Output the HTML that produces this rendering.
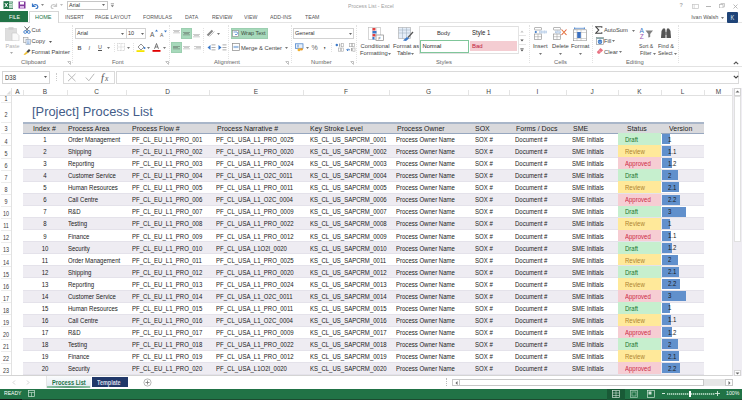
<!DOCTYPE html><html><head><meta charset="utf-8"><style>
*{margin:0;padding:0;box-sizing:border-box}
html,body{width:742px;height:400px;overflow:hidden;background:#fff;font-family:"Liberation Sans",sans-serif}
body>div,.a{position:absolute}
.t{position:absolute;white-space:nowrap}
</style></head><body>
<div class="t" style="left:348px;top:2px;font-size:6px;line-height:8px;color:#a0a0a0;transform:scaleX(0.867);transform-origin:0 0">Process List - Excel</div>
<div style="left:0px;top:11px;width:27.5px;height:11.5px;background:#217346"></div>
<div class="t" style="left:8.5px;top:13.5px;font-size:5.6px;line-height:7.6px;color:#fff;transform:scaleX(0.93);transform-origin:0 0">FILE</div>
<div style="left:29px;top:11px;width:30px;height:12px;background:#fff;border:1px solid #d6d6d6;border-bottom:none"></div>
<div class="t" style="left:35px;top:13.5px;font-size:5.6px;line-height:7.6px;color:#217346;transform:scaleX(0.98);transform-origin:0 0">HOME</div>
<div class="t" style="left:65px;top:13.5px;font-size:5.6px;line-height:7.6px;color:#555;transform:scaleX(0.93);transform-origin:0 0">INSERT</div>
<div class="t" style="left:95px;top:13.5px;font-size:5.6px;line-height:7.6px;color:#555;transform:scaleX(0.93);transform-origin:0 0">PAGE LAYOUT</div>
<div class="t" style="left:143px;top:13.5px;font-size:5.6px;line-height:7.6px;color:#555;transform:scaleX(0.93);transform-origin:0 0">FORMULAS</div>
<div class="t" style="left:185px;top:13.5px;font-size:5.6px;line-height:7.6px;color:#555;transform:scaleX(0.93);transform-origin:0 0">DATA</div>
<div class="t" style="left:212px;top:13.5px;font-size:5.6px;line-height:7.6px;color:#555;transform:scaleX(0.93);transform-origin:0 0">REVIEW</div>
<div class="t" style="left:244px;top:13.5px;font-size:5.6px;line-height:7.6px;color:#555;transform:scaleX(0.93);transform-origin:0 0">VIEW</div>
<div class="t" style="left:270px;top:13.5px;font-size:5.6px;line-height:7.6px;color:#555;transform:scaleX(0.93);transform-origin:0 0">ADD-INS</div>
<div class="t" style="left:305px;top:13.5px;font-size:5.6px;line-height:7.6px;color:#555;transform:scaleX(0.93);transform-origin:0 0">TEAM</div>
<div style="left:0px;top:22px;width:29px;height:1px;background:#e4e4e4"></div>
<div style="left:59px;top:22px;width:683px;height:1px;background:#e4e4e4"></div>
<div style="left:0px;top:66px;width:742px;height:1px;background:#e2e2e2"></div>
<svg style="position:absolute;left:3px;top:1px;" width="10" height="8" viewBox="0 0 10 8"><rect x="3" y="1" width="7" height="6.5" fill="#fff" stroke="#1e7145" stroke-width="0.8"/><line x1="6" y1="2.5" x2="9" y2="2.5" stroke="#4ea06e" stroke-width="0.8"/><line x1="6" y1="4.2" x2="9" y2="4.2" stroke="#4ea06e" stroke-width="0.8"/><line x1="6" y1="6" x2="9" y2="6" stroke="#4ea06e" stroke-width="0.8"/><rect x="0.5" y="0.2" width="5.5" height="7.8" fill="#1e7145"/><path d="M1.8 2 L4.6 6.2 M4.6 2 L1.8 6.2" stroke="#fff" stroke-width="1"/></svg>
<svg style="position:absolute;left:18px;top:1px;" width="8" height="8" viewBox="0 0 8 8"><rect x="0.5" y="0.5" width="7" height="7" fill="#80379b"/><rect x="2" y="1" width="4" height="2.5" fill="#fff"/><rect x="2" y="5" width="4" height="2.5" fill="#d9b8e6"/></svg>
<svg style="position:absolute;left:31px;top:2px;" width="8" height="7" viewBox="0 0 8 7"><path d="M1.5 1.5 L1.5 4.5 L4.5 4.5" fill="none" stroke="#3a78c8" stroke-width="1.2"/><path d="M1.8 4.2 C3 2 6.5 2 6.8 4.5 C7 6 5.5 6.8 4.5 6.8" fill="none" stroke="#3a78c8" stroke-width="1.3"/></svg>
<svg style="position:absolute;left:41px;top:4px;" width="3" height="2" viewBox="0 0 3 2"><path d="M0 0 L3 0 L1.5 2Z" fill="#888"/></svg>
<svg style="position:absolute;left:50px;top:2px;" width="8" height="7" viewBox="0 0 8 7"><path d="M6.5 1.5 L6.5 4.5 L3.5 4.5" fill="none" stroke="#c8c8c8" stroke-width="1.2"/><path d="M6.2 4.2 C5 2 1.5 2 1.2 4.5 C1 6 2.5 6.8 3.5 6.8" fill="none" stroke="#c8c8c8" stroke-width="1.3"/></svg>
<svg style="position:absolute;left:60px;top:4px;" width="3" height="2" viewBox="0 0 3 2"><path d="M0 0 L3 0 L1.5 2Z" fill="#bbb"/></svg>
<div style="left:67px;top:1px;width:41px;height:9px;border:1px solid #c6c6c6;background:#fff"></div>
<div class="t" style="left:69px;top:2px;font-size:5.5px;line-height:7px;color:#333;">Arial</div>
<svg style="position:absolute;left:102px;top:4px;" width="3" height="2" viewBox="0 0 3 2"><path d="M0 0 L3 0 L1.5 2Z" fill="#666"/></svg>
<svg style="position:absolute;left:110px;top:3px;" width="5" height="5" viewBox="0 0 5 5"><line x1="0.8" y1="0.8" x2="4" y2="0.8" stroke="#777" stroke-width="0.7"/><path d="M0.8 2.2 L4 2.2 L2.4 4.2Z" fill="#777"/></svg>
<div class="t" style="left:679.5px;top:2px;font-size:5.5px;line-height:7px;color:#a8a8a8;font-weight:bold">?</div>
<svg style="position:absolute;left:692px;top:3.5px;" width="7" height="5" viewBox="0 0 7 5"><rect x="0.5" y="0.5" width="6" height="4" fill="none" stroke="#c4c4c4" stroke-width="0.7"/><line x1="2.2" y1="0.5" x2="2.2" y2="4.5" stroke="#c4c4c4" stroke-width="0.6"/></svg>
<div style="left:705.5px;top:5.5px;width:5px;height:1px;background:#b4b4b4"></div>
<svg style="position:absolute;left:719px;top:3px;" width="6" height="5" viewBox="0 0 6 5"><rect x="0.5" y="1.5" width="3.5" height="3.5" fill="none" stroke="#b4b4b4" stroke-width="0.7"/><path d="M1.8 1.5 V0.5 H5.5 V3.8 H4" fill="none" stroke="#b4b4b4" stroke-width="0.7"/></svg>
<svg style="position:absolute;left:733px;top:3.5px;" width="5" height="5" viewBox="0 0 5 5"><path d="M0.5 0.5 L4.5 4.5 M4.5 0.5 L0.5 4.5" stroke="#a8a8a8" stroke-width="0.8"/></svg>
<div class="t" style="left:691.3px;top:14px;font-size:5.5px;line-height:7px;color:#555;">Ivan Walsh</div>
<svg style="position:absolute;left:720.5px;top:17px;" width="3" height="2" viewBox="0 0 3 2"><path d="M0 0 L3 0 L1.5 2Z" fill="#777"/></svg>
<div style="left:727px;top:12px;width:10.5px;height:10.5px;background:#1f4478;border-radius:1px"></div>
<div class="t" style="left:730px;top:13.5px;font-size:7px;line-height:7px;color:#dfe8f5;transform:scaleX(0.8)">K</div>
<svg style="position:absolute;left:5px;top:27px;" width="15" height="14" viewBox="0 0 15 14"><rect x="0.5" y="1.5" width="11" height="12" fill="#dedede" stroke="#cfcfcf" stroke-width="0.6"/><rect x="3.5" y="0.2" width="5" height="2.5" fill="#cfcfcf"/><path d="M7 6 H11.5 L14 8.5 V13.8 H7Z" fill="#fafafa" stroke="#c8c8c8" stroke-width="0.6"/></svg>
<div class="t" style="left:5.5px;top:43px;font-size:5.5px;line-height:7px;color:#b0b0b0;">Paste</div>
<svg style="position:absolute;left:10px;top:52px;" width="3" height="2" viewBox="0 0 3 2"><path d="M0 0 L3 0 L1.5 2Z" fill="#aaa"/></svg>
<svg style="position:absolute;left:23px;top:26px;" width="8" height="8" viewBox="0 0 8 8"><path d="M1.5 0.5 L5.5 5 M6.5 0.5 L2.5 5" stroke="#555" stroke-width="0.9"/><circle cx="2.2" cy="6" r="1.4" fill="none" stroke="#3b7ac8" stroke-width="0.9"/><circle cx="5.8" cy="6" r="1.4" fill="none" stroke="#3b7ac8" stroke-width="0.9"/></svg>
<div class="t" style="left:31.5px;top:26.5px;font-size:5.8px;line-height:7px;color:#444;">Cut</div>
<svg style="position:absolute;left:22.5px;top:37px;" width="8" height="8" viewBox="0 0 8 8"><rect x="0.5" y="0.5" width="4.5" height="5" fill="#f4f4f4" stroke="#999" stroke-width="0.6"/><rect x="3" y="2.5" width="4.5" height="5" fill="#eef3fa" stroke="#8a9bb0" stroke-width="0.6"/><path d="M4 4 H6.5 M4 5.3 H6.5 M4 6.5 H6.5" stroke="#5a8fd0" stroke-width="0.5"/></svg>
<div class="t" style="left:31.5px;top:37.5px;font-size:5.8px;line-height:7px;color:#444;">Copy</div>
<svg style="position:absolute;left:49px;top:41px;" width="3" height="2" viewBox="0 0 3 2"><path d="M0 0 L3 0 L1.5 2Z" fill="#555"/></svg>
<svg style="position:absolute;left:23px;top:48px;" width="8" height="7" viewBox="0 0 8 7"><path d="M0.5 6.5 L3.5 3.5 L5 5 L2 7Z" fill="#f2c233"/><path d="M3.5 3.5 L6 1 L7.5 2.5 L5 5Z" fill="#444"/></svg>
<div class="t" style="left:31.5px;top:48.5px;font-size:5.8px;line-height:7px;color:#444;">Format Painter</div>
<div class="t" style="left:21px;top:58.5px;font-size:5.8px;line-height:7px;color:#666;">Clipboard</div>
<svg style="position:absolute;left:67px;top:61px;" width="4" height="4" viewBox="0 0 4 4"><path d="M0.5 0.5 H3.5 V3.5" fill="none" stroke="#999" stroke-width="0.6"/><path d="M1 1 L3.3 3.3" stroke="#999" stroke-width="0.6"/></svg>
<div style="left:72px;top:25px;width:1px;height:38px;border-left:1px dotted #e2e2e2"></div>
<div style="left:75px;top:28px;width:52px;height:11px;border:1px solid #d2d2d2;background:#fff"></div>
<div style="left:126px;top:28px;width:20px;height:11px;border:1px solid #d2d2d2;background:#fff"></div>
<div class="t" style="left:77px;top:30px;font-size:5.5px;line-height:7px;color:#333;">Arial</div>
<svg style="position:absolute;left:121px;top:33px;" width="3" height="2" viewBox="0 0 3 2"><path d="M0 0 L3 0 L1.5 2Z" fill="#666"/></svg>
<div class="t" style="left:128px;top:30px;font-size:5.5px;line-height:7px;color:#333;">10</div>
<svg style="position:absolute;left:141px;top:33px;" width="3" height="2" viewBox="0 0 3 2"><path d="M0 0 L3 0 L1.5 2Z" fill="#666"/></svg>
<div class="t" style="left:150px;top:30.5px;font-size:6.5px;line-height:7px;color:#555;">A</div>
<svg style="position:absolute;left:155px;top:29px;" width="3" height="3" viewBox="0 0 3 3"><path d="M0 2.5 L1.5 0.5 L3 2.5Z" fill="#3a78c8"/></svg>
<div class="t" style="left:160px;top:32px;font-size:5px;line-height:7px;color:#555;">A</div>
<svg style="position:absolute;left:164px;top:30px;" width="3" height="3" viewBox="0 0 3 3"><path d="M0 0.5 L1.5 2.5 L3 0.5Z" fill="#3a78c8"/></svg>
<div class="t" style="left:77.5px;top:44.5px;font-size:5.5px;line-height:7px;color:#555;font-weight:bold">B</div>
<div class="t" style="left:88.5px;top:44.5px;font-size:5.5px;line-height:7px;color:#555;font-style:italic;font-family:"Liberation Serif",serif">I</div>
<div class="t" style="left:98px;top:44px;font-size:5.5px;line-height:7px;color:#555;text-decoration:underline">U</div>
<svg style="position:absolute;left:107px;top:47px;" width="3" height="2" viewBox="0 0 3 2"><path d="M0 0 L3 0 L1.5 2Z" fill="#777"/></svg>
<div style="left:114px;top:43px;width:1px;height:9px;border-left:1px dotted #e2e2e2"></div>
<svg style="position:absolute;left:117px;top:43px;" width="8" height="8" viewBox="0 0 8 8"><rect x="0.5" y="0.5" width="7" height="7" fill="none" stroke="#bbb" stroke-width="0.6" stroke-dasharray="1 0.6"/><line x1="4" y1="0.5" x2="4" y2="7.5" stroke="#ccc" stroke-width="0.5"/><line x1="0.5" y1="4" x2="7.5" y2="4" stroke="#ccc" stroke-width="0.5"/></svg>
<svg style="position:absolute;left:127px;top:47px;" width="3" height="2" viewBox="0 0 3 2"><path d="M0 0 L3 0 L1.5 2Z" fill="#777"/></svg>
<div style="left:133px;top:43px;width:1px;height:9px;border-left:1px dotted #e2e2e2"></div>
<svg style="position:absolute;left:136px;top:42px;" width="10" height="10" viewBox="0 0 10 10"><path d="M2 5 L5 2 L8 5 L5 8Z" fill="#fff" stroke="#666" stroke-width="0.7"/><circle cx="8.5" cy="6" r="1" fill="#3a78c8"/><rect x="0.5" y="8.2" width="8" height="1.8" fill="#f5e400"/></svg>
<svg style="position:absolute;left:147px;top:47px;" width="3" height="2" viewBox="0 0 3 2"><path d="M0 0 L3 0 L1.5 2Z" fill="#777"/></svg>
<svg style="position:absolute;left:152px;top:42px;" width="9" height="10" viewBox="0 0 9 10"><path d="M2.5 6.8 L4.5 1.5 L6.5 6.8 M3.2 5 H5.8" fill="none" stroke="#555" stroke-width="0.8"/><rect x="0.5" y="8" width="8" height="1.8" fill="#e00000"/></svg>
<svg style="position:absolute;left:163px;top:47px;" width="3" height="2" viewBox="0 0 3 2"><path d="M0 0 L3 0 L1.5 2Z" fill="#777"/></svg>
<div class="t" style="left:112px;top:58.5px;font-size:5.8px;line-height:7px;color:#666;">Font</div>
<svg style="position:absolute;left:165px;top:61px;" width="4" height="4" viewBox="0 0 4 4"><path d="M0.5 0.5 H3.5 V3.5" fill="none" stroke="#999" stroke-width="0.6"/><path d="M1 1 L3.3 3.3" stroke="#999" stroke-width="0.6"/></svg>
<div style="left:169px;top:25px;width:1px;height:38px;border-left:1px dotted #e2e2e2"></div>
<svg style="position:absolute;left:173px;top:29.5px;" width="7" height="4.9" viewBox="0 0 7 4.9"><rect x="0" y="0.0" width="7" height="0.6" fill="#aaa"/><rect x="1" y="1.3" width="5" height="0.6" fill="#aaa"/><rect x="0" y="2.6" width="7" height="0.6" fill="#aaa"/></svg>
<div style="left:181px;top:28px;width:11px;height:11px;background:#a7d9bb;border:1px solid #9ccfb0"></div>
<svg style="position:absolute;left:183px;top:31.5px;" width="7" height="4.9" viewBox="0 0 7 4.9"><rect x="0" y="0.0" width="7" height="0.6" fill="#6a7a70"/><rect x="1" y="1.3" width="5" height="0.6" fill="#6a7a70"/><rect x="0" y="2.6" width="7" height="0.6" fill="#6a7a70"/></svg>
<svg style="position:absolute;left:193px;top:33.5px;" width="7" height="4.9" viewBox="0 0 7 4.9"><rect x="0" y="0.0" width="7" height="0.6" fill="#aaa"/><rect x="1" y="1.3" width="5" height="0.6" fill="#aaa"/><rect x="0" y="2.6" width="7" height="0.6" fill="#aaa"/></svg>
<svg style="position:absolute;left:206px;top:29px;" width="9" height="8" viewBox="0 0 9 8"><path d="M1.5 6.5 L6.5 1.5" stroke="#888" stroke-width="2.2"/><path d="M3.5 7.5 L8.5 2.5" stroke="#aaa" stroke-width="0.7"/></svg>
<svg style="position:absolute;left:217px;top:33px;" width="3" height="2" viewBox="0 0 3 2"><path d="M0 0 L3 0 L1.5 2Z" fill="#777"/></svg>
<div style="left:171px;top:42px;width:11px;height:11px;background:#a7d9bb;border:1px solid #9ccfb0"></div>
<svg style="position:absolute;left:173px;top:45.5px;" width="7" height="4.9" viewBox="0 0 7 4.9"><rect x="0" y="0.0" width="7" height="0.6" fill="#6a7a70"/><rect x="0" y="1.3" width="5" height="0.6" fill="#6a7a70"/><rect x="0" y="2.6" width="7" height="0.6" fill="#6a7a70"/></svg>
<svg style="position:absolute;left:183px;top:45.5px;" width="7" height="4.9" viewBox="0 0 7 4.9"><rect x="0" y="0.0" width="7" height="0.6" fill="#aaa"/><rect x="1" y="1.3" width="5" height="0.6" fill="#aaa"/><rect x="0" y="2.6" width="7" height="0.6" fill="#aaa"/></svg>
<svg style="position:absolute;left:194px;top:45.5px;" width="7" height="4.9" viewBox="0 0 7 4.9"><rect x="0" y="0.0" width="7" height="0.6" fill="#aaa"/><rect x="2" y="1.3" width="5" height="0.6" fill="#aaa"/><rect x="0" y="2.6" width="7" height="0.6" fill="#aaa"/></svg>
<div style="left:203px;top:28px;width:1px;height:25px;border-left:1px dotted #e2e2e2"></div>
<svg style="position:absolute;left:207px;top:44px;" width="9" height="7" viewBox="0 0 9 7"><path d="M0.5 3.5 L3.5 1 V6Z" fill="#3a78c8"/><rect x="4.5" y="0.5" width="4" height="0.8" fill="#999"/><rect x="4.5" y="3" width="4" height="0.8" fill="#999"/><rect x="4.5" y="5.5" width="4" height="0.8" fill="#999"/></svg>
<svg style="position:absolute;left:218px;top:44px;" width="9" height="7" viewBox="0 0 9 7"><path d="M3.5 3.5 L0.5 1 V6Z" fill="#3a78c8"/><rect x="4.5" y="0.5" width="4" height="0.8" fill="#999"/><rect x="4.5" y="3" width="4" height="0.8" fill="#999"/><rect x="4.5" y="5.5" width="4" height="0.8" fill="#999"/></svg>
<div style="left:228px;top:25px;width:1px;height:38px;border-left:1px dotted #e2e2e2"></div>
<div style="left:231px;top:28px;width:37px;height:11px;background:#a7d9bb;border:1px solid #9ccfb0"></div>
<svg style="position:absolute;left:232px;top:30px;" width="8" height="7" viewBox="0 0 8 7"><rect x="0.5" y="0.5" width="6" height="6" fill="#fff" stroke="#888" stroke-width="0.6"/><path d="M1.5 2 H5 Q6.5 3.3 5 4.5 H3" fill="none" stroke="#3a78c8" stroke-width="0.7"/></svg>
<div class="t" style="left:241px;top:30px;font-size:5.5px;line-height:7px;color:#3b4a40;">Wrap Text</div>
<svg style="position:absolute;left:232px;top:43px;" width="8" height="8" viewBox="0 0 8 8"><rect x="0.5" y="0.5" width="7" height="7" fill="#fff" stroke="#888" stroke-width="0.7"/><rect x="1.5" y="2.8" width="5" height="2.4" fill="#cfe0f3"/><path d="M1.5 4 H6.5" stroke="#3a78c8" stroke-width="0.6"/></svg>
<div class="t" style="left:241px;top:44.5px;font-size:5.8px;line-height:7px;color:#444;">Merge &amp; Center</div>
<svg style="position:absolute;left:285px;top:47px;" width="3" height="2" viewBox="0 0 3 2"><path d="M0 0 L3 0 L1.5 2Z" fill="#777"/></svg>
<div class="t" style="left:214px;top:58.5px;font-size:5.8px;line-height:7px;color:#666;">Alignment</div>
<svg style="position:absolute;left:285px;top:61px;" width="4" height="4" viewBox="0 0 4 4"><path d="M0.5 0.5 H3.5 V3.5" fill="none" stroke="#999" stroke-width="0.6"/><path d="M1 1 L3.3 3.3" stroke="#999" stroke-width="0.6"/></svg>
<div style="left:291px;top:25px;width:1px;height:38px;border-left:1px dotted #e2e2e2"></div>
<div style="left:293px;top:28px;width:61px;height:11px;border:1px solid #d2d2d2;background:#fff"></div>
<div class="t" style="left:295px;top:30px;font-size:5.5px;line-height:7px;color:#333;">General</div>
<svg style="position:absolute;left:349px;top:33px;" width="3" height="2" viewBox="0 0 3 2"><path d="M0 0 L3 0 L1.5 2Z" fill="#666"/></svg>
<svg style="position:absolute;left:295px;top:43px;" width="10" height="9" viewBox="0 0 10 9"><rect x="0.5" y="0.8" width="7.5" height="4.5" fill="#e8f0fa" stroke="#3a78c8" stroke-width="0.7"/><path d="M2 2.2 H4 M2 3.8 H4" stroke="#3a78c8" stroke-width="0.6"/><circle cx="4" cy="6.8" r="1.5" fill="#f0b030"/><circle cx="6.5" cy="6.3" r="1.3" fill="#e89a28"/></svg>
<svg style="position:absolute;left:305.5px;top:47px;" width="3" height="2" viewBox="0 0 3 2"><path d="M0 0 L3 0 L1.5 2Z" fill="#777"/></svg>
<div class="t" style="left:311.5px;top:44px;font-size:7px;line-height:7px;color:#666;">%</div>
<div style="left:316px;top:44px;width:0px;height:0px;"></div>
<div class="t" style="left:323.5px;top:42px;font-size:8px;line-height:7px;color:#444;font-weight:bold">,</div>
<div style="left:331px;top:43px;width:1px;height:9px;border-left:1px dotted #e2e2e2"></div>
<svg style="position:absolute;left:334.5px;top:43px;" width="10" height="9" viewBox="0 0 10 9"><circle cx="1.8" cy="2" r="1.2" fill="#3a78c8"/><rect x="4" y="0.5" width="1.3" height="3.2" fill="#a8a8a8"/><rect x="6.3" y="0.5" width="2.2" height="3.2" fill="none" stroke="#a8a8a8" stroke-width="0.6"/><rect x="3.5" y="5" width="2.2" height="3.2" fill="none" stroke="#a8a8a8" stroke-width="0.6"/><rect x="6.3" y="5" width="2.2" height="3.2" fill="none" stroke="#a8a8a8" stroke-width="0.6"/></svg>
<svg style="position:absolute;left:346px;top:43px;" width="10" height="9" viewBox="0 0 10 9"><rect x="3.5" y="0.5" width="2.2" height="3.2" fill="none" stroke="#a8a8a8" stroke-width="0.6"/><rect x="6.3" y="0.5" width="2.2" height="3.2" fill="none" stroke="#a8a8a8" stroke-width="0.6"/><rect x="5" y="5" width="1.3" height="3.2" fill="#a8a8a8"/><rect x="6.8" y="5" width="2.2" height="3.2" fill="none" stroke="#a8a8a8" stroke-width="0.6"/><path d="M0.8 6.8 H4 M2 5.6 L0.8 6.8 L2 8" fill="none" stroke="#3a78c8" stroke-width="0.9"/></svg>
<div class="t" style="left:311px;top:58.5px;font-size:5.8px;line-height:7px;color:#666;">Number</div>
<svg style="position:absolute;left:350px;top:61px;" width="4" height="4" viewBox="0 0 4 4"><path d="M0.5 0.5 H3.5 V3.5" fill="none" stroke="#999" stroke-width="0.6"/><path d="M1 1 L3.3 3.3" stroke="#999" stroke-width="0.6"/></svg>
<div style="left:356px;top:25px;width:1px;height:38px;border-left:1px dotted #e2e2e2"></div>
<svg style="position:absolute;left:368px;top:27px;" width="16" height="14" viewBox="0 0 16 14"><rect x="0.5" y="0.5" width="12" height="12" fill="#fff" stroke="#bbb" stroke-width="0.6"/><line x1="4.5" y1="0.5" x2="4.5" y2="12.5" stroke="#ccc" stroke-width="0.5"/><line x1="8.5" y1="0.5" x2="8.5" y2="12.5" stroke="#ccc" stroke-width="0.5"/><rect x="4.5" y="1" width="3" height="2.5" fill="#e04040"/><rect x="4.5" y="4" width="4" height="2.5" fill="#3a78c8"/><rect x="4.5" y="7" width="3" height="2.5" fill="#e04040"/><rect x="4.5" y="10" width="2" height="2.5" fill="#3a78c8"/><rect x="8" y="8" width="7.5" height="5.5" fill="#fff" stroke="#888" stroke-width="0.7"/><text x="10" y="12.5" font-size="5" fill="#555" font-family="Liberation Sans">≠</text></svg>
<div class="t" style="left:360.5px;top:43px;font-size:5.8px;line-height:7px;color:#444;">Conditional</div>
<div class="t" style="left:360px;top:50px;font-size:5.8px;line-height:7px;color:#444;">Formatting</div>
<svg style="position:absolute;left:387.5px;top:53px;" width="3" height="2" viewBox="0 0 3 2"><path d="M0 0 L3 0 L1.5 2Z" fill="#777"/></svg>
<svg style="position:absolute;left:398px;top:27px;" width="16" height="14" viewBox="0 0 16 14"><rect x="0.5" y="0.5" width="12" height="11" fill="#e4edf8" stroke="#aaa" stroke-width="0.6"/><line x1="4.5" y1="0.5" x2="4.5" y2="11.5" stroke="#9ab" stroke-width="0.5"/><line x1="8.5" y1="0.5" x2="8.5" y2="11.5" stroke="#9ab" stroke-width="0.5"/><line x1="0.5" y1="3" x2="12.5" y2="3" stroke="#9ab" stroke-width="0.5"/><line x1="0.5" y1="6" x2="12.5" y2="6" stroke="#9ab" stroke-width="0.5"/><path d="M5 13.5 L9 10 L11 11.5 L8 14Z" fill="#3a78c8"/><path d="M10 10.5 L15 5" stroke="#555" stroke-width="1.2"/></svg>
<div class="t" style="left:393px;top:43px;font-size:5.8px;line-height:7px;color:#444;">Format as</div>
<div class="t" style="left:397px;top:50px;font-size:5.8px;line-height:7px;color:#444;">Table</div>
<svg style="position:absolute;left:410.5px;top:53px;" width="3" height="2" viewBox="0 0 3 2"><path d="M0 0 L3 0 L1.5 2Z" fill="#777"/></svg>
<div style="left:419px;top:26px;width:107px;height:27.5px;border:1px solid #e0e0e0;background:#fff"></div>
<div class="t" style="left:437px;top:29.5px;font-size:5.8px;line-height:7px;color:#333;">Body</div>
<div class="t" style="left:472px;top:29px;font-size:6.5px;line-height:7px;color:#222;transform:scaleX(0.92);transform-origin:0 0">Style 1</div>
<div style="left:420px;top:40px;width:49px;height:13px;border:1px solid #7fc69a;background:#fff"></div>
<div class="t" style="left:422.5px;top:43px;font-size:5.8px;line-height:7px;color:#222;">Normal</div>
<div style="left:470px;top:41px;width:47px;height:10px;background:#f4cdd2"></div>
<div class="t" style="left:472px;top:42.5px;font-size:6px;line-height:7px;color:#c0203a;">Bad</div>
<div style="left:518px;top:26px;width:8px;height:27.5px;border-left:1px solid #e4e4e4;background:#fff"></div>
<svg style="position:absolute;left:520px;top:29.5px;" width="4" height="3" viewBox="0 0 4 3"><path d="M0.3 2.5 L2 0.5 L3.7 2.5Z" fill="#c4c4c4"/></svg>
<div style="left:518px;top:35px;width:8px;height:1px;background:#e4e4e4"></div>
<svg style="position:absolute;left:520px;top:39px;" width="4" height="3" viewBox="0 0 4 3"><path d="M0.3 0.5 L2 2.5 L3.7 0.5Z" fill="#555"/></svg>
<div style="left:518px;top:44px;width:8px;height:1px;background:#e4e4e4"></div>
<svg style="position:absolute;left:520px;top:47.5px;" width="4" height="4" viewBox="0 0 4 4"><line x1="0.3" y1="0.5" x2="3.7" y2="0.5" stroke="#555" stroke-width="0.6"/><path d="M0.3 1.5 L2 3.5 L3.7 1.5Z" fill="#555"/></svg>
<div class="t" style="left:436px;top:58.5px;font-size:5.8px;line-height:7px;color:#666;">Styles</div>
<div style="left:529px;top:25px;width:1px;height:38px;border-left:1px dotted #e2e2e2"></div>
<svg style="position:absolute;left:534px;top:27px;" width="14" height="13" viewBox="0 0 14 13"><rect x="0.5" y="0.5" width="7" height="2.5" rx="0.5" fill="#fff" stroke="#888" stroke-width="0.6"/><rect x="0.5" y="7" width="7" height="5.5" fill="#fff" stroke="#888" stroke-width="0.6"/><line x1="0.5" y1="9.7" x2="7.5" y2="9.7" stroke="#999" stroke-width="0.5"/><line x1="4" y1="7" x2="4" y2="12.5" stroke="#999" stroke-width="0.5"/><circle cx="1.8" cy="5" r="1.1" fill="#3a78c8"/><rect x="5.5" y="4" width="7" height="2" fill="#dbe6f4" stroke="#7aa0d0" stroke-width="0.5" stroke-dasharray="1 0.5"/></svg>
<svg style="position:absolute;left:553px;top:27px;" width="14" height="13" viewBox="0 0 14 13"><rect x="0.5" y="0.5" width="7" height="2.5" rx="0.5" fill="#fff" stroke="#888" stroke-width="0.6"/><rect x="0.5" y="7" width="7" height="5.5" fill="#fff" stroke="#888" stroke-width="0.6"/><line x1="0.5" y1="9.7" x2="7.5" y2="9.7" stroke="#999" stroke-width="0.5"/><line x1="4" y1="7" x2="4" y2="12.5" stroke="#999" stroke-width="0.5"/><rect x="2.5" y="4" width="5" height="2" fill="#dbe6f4" stroke="#7aa0d0" stroke-width="0.5" stroke-dasharray="1 0.5"/><path d="M8.5 2.5 L13.5 8 M13.5 2.5 L8.5 8" stroke="#e06040" stroke-width="1.1"/><path d="M9.5 3.5 L12.5 7" stroke="#f0c040" stroke-width="0.5"/></svg>
<svg style="position:absolute;left:573px;top:26.5px;" width="14" height="14" viewBox="0 0 14 14"><path d="M1 1.3 H12" stroke="#3a78c8" stroke-width="0.7"/><path d="M2.2 0.3 L1 1.3 L2.2 2.3 M10.8 0.3 L12 1.3 L10.8 2.3" fill="none" stroke="#3a78c8" stroke-width="0.6"/><rect x="0.5" y="2.8" width="13" height="11" fill="#fff" stroke="#888" stroke-width="0.6"/><line x1="4" y1="2.8" x2="4" y2="13.8" stroke="#aaa" stroke-width="0.5"/><line x1="8" y1="2.8" x2="8" y2="13.8" stroke="#aaa" stroke-width="0.5"/><line x1="0.5" y1="5.5" x2="13.5" y2="5.5" stroke="#aaa" stroke-width="0.5"/><line x1="0.5" y1="11.5" x2="13.5" y2="11.5" stroke="#aaa" stroke-width="0.5"/><rect x="4.2" y="5" width="3.6" height="6" fill="#3a6fc0"/></svg>
<div class="t" style="left:533px;top:42.8px;font-size:5.8px;line-height:7px;color:#444;">Insert</div>
<svg style="position:absolute;left:539px;top:52.5px;" width="3" height="2" viewBox="0 0 3 2"><path d="M0 0 L3 0 L1.5 2Z" fill="#777"/></svg>
<div class="t" style="left:552px;top:42.8px;font-size:5.8px;line-height:7px;color:#444;">Delete</div>
<svg style="position:absolute;left:559px;top:52.5px;" width="3" height="2" viewBox="0 0 3 2"><path d="M0 0 L3 0 L1.5 2Z" fill="#777"/></svg>
<div class="t" style="left:571px;top:42.8px;font-size:5.8px;line-height:7px;color:#444;">Format</div>
<svg style="position:absolute;left:579px;top:52.5px;" width="3" height="2" viewBox="0 0 3 2"><path d="M0 0 L3 0 L1.5 2Z" fill="#777"/></svg>
<div class="t" style="left:554px;top:58.5px;font-size:5.8px;line-height:7px;color:#666;">Cells</div>
<div style="left:592px;top:25px;width:1px;height:38px;border-left:1px dotted #e2e2e2"></div>
<svg style="position:absolute;left:595px;top:26px;" width="8" height="8" viewBox="0 0 8 8"><path d="M6.8 1.8 V0.8 H0.8 L3.8 4 L0.8 7.2 H6.8 V6.2" fill="none" stroke="#444" stroke-width="1.1"/></svg>
<div class="t" style="left:604px;top:27px;font-size:5.8px;line-height:7px;color:#444;">AutoSum</div>
<svg style="position:absolute;left:632px;top:29.5px;" width="3" height="2" viewBox="0 0 3 2"><path d="M0 0 L3 0 L1.5 2Z" fill="#777"/></svg>
<svg style="position:absolute;left:595.5px;top:36.5px;" width="8" height="8" viewBox="0 0 8 8"><rect x="0.5" y="0.5" width="7" height="7" fill="#fff" stroke="#888" stroke-width="0.6"/><rect x="0.5" y="0.5" width="7" height="1.5" fill="#8aa"/><circle cx="4" cy="4.8" r="2.2" fill="#3a78c8"/><path d="M2.8 4.3 L4 5.6 L5.2 4.3" fill="none" stroke="#fff" stroke-width="0.6"/></svg>
<div class="t" style="left:604px;top:37.5px;font-size:5.8px;line-height:7px;color:#444;">Fill</div>
<svg style="position:absolute;left:612px;top:40px;" width="3" height="2" viewBox="0 0 3 2"><path d="M0 0 L3 0 L1.5 2Z" fill="#777"/></svg>
<svg style="position:absolute;left:595.5px;top:47px;" width="8" height="7" viewBox="0 0 8 7"><path d="M0.8 5 L4.5 1 L7.2 3.2 L3.5 6.8 H2Z" fill="#e87080"/><path d="M2.5 3.2 L5 5.5" stroke="#fff" stroke-width="0.4"/></svg>
<div class="t" style="left:604px;top:48.5px;font-size:5.8px;line-height:7px;color:#444;">Clear</div>
<svg style="position:absolute;left:619px;top:51px;" width="3" height="2" viewBox="0 0 3 2"><path d="M0 0 L3 0 L1.5 2Z" fill="#777"/></svg>
<svg style="position:absolute;left:639px;top:26px;" width="15" height="13" viewBox="0 0 15 13"><text x="0.5" y="6.5" font-size="6.5" fill="#3a78c8" font-family="Liberation Sans">A</text><text x="0.8" y="12.5" font-size="6.5" fill="#9b59b6" font-family="Liberation Sans">Z</text><path d="M6.5 4.5 H14 L11.2 8 V11 L9.3 11.5 V8Z" fill="#808080"/></svg>
<div class="t" style="left:639px;top:43px;font-size:5.8px;line-height:7px;color:#444;transform:scaleX(0.88);transform-origin:0 0">Sort &amp;</div>
<div class="t" style="left:639.5px;top:50px;font-size:5.8px;line-height:7px;color:#444;transform:scaleX(0.9);transform-origin:0 0">Filter</div>
<svg style="position:absolute;left:652.5px;top:52.5px;" width="3" height="2" viewBox="0 0 3 2"><path d="M0 0 L3 0 L1.5 2Z" fill="#777"/></svg>
<svg style="position:absolute;left:660px;top:27px;" width="12" height="12" viewBox="0 0 12 12"><path d="M1 11 L1.5 4 L3 1.5 L5 1.5 L5.5 4 V11Z" fill="#555"/><path d="M6.5 11 L6.5 4 L7 1.5 L9 1.5 L10.5 4 L11 11Z" fill="#555"/><rect x="5" y="5" width="2" height="3" fill="#777"/></svg>
<div class="t" style="left:658px;top:43px;font-size:5.8px;line-height:7px;color:#444;transform:scaleX(0.95);transform-origin:0 0">Find &amp;</div>
<div class="t" style="left:657.5px;top:50px;font-size:5.8px;line-height:7px;color:#444;transform:scaleX(0.9);transform-origin:0 0">Select</div>
<svg style="position:absolute;left:673.5px;top:52.5px;" width="3" height="2" viewBox="0 0 3 2"><path d="M0 0 L3 0 L1.5 2Z" fill="#777"/></svg>
<div class="t" style="left:626px;top:58.5px;font-size:5.8px;line-height:7px;color:#666;">Editing</div>
<div style="left:678px;top:25px;width:1px;height:38px;border-left:1px dotted #e2e2e2"></div>
<svg style="position:absolute;left:733px;top:60.5px;" width="6" height="4" viewBox="0 0 6 4"><path d="M0.8 3.2 L3 1 L5.2 3.2" fill="none" stroke="#555" stroke-width="1.1"/></svg>
<div style="left:2px;top:70.5px;width:48px;height:13px;border:1px solid #d4d4d4;background:#fff"></div>
<div class="t" style="left:5px;top:73.5px;font-size:6.3px;line-height:8.3px;color:#333;transform:scaleX(0.95);transform-origin:0 0">D38</div>
<div style="left:63px;top:70.5px;width:52px;height:13px;border:1px solid #dadada;background:#fff"></div>
<div style="left:116px;top:70.5px;width:623px;height:13px;border:1px solid #dadada;background:#fff"></div>
<svg style="position:absolute;left:67px;top:72.5px;" width="10" height="9" viewBox="0 0 10 9"><path d="M1 0.8 L8.5 8.2 M8.5 0.8 L1 8.2" stroke="#b8b8b8" stroke-width="1"/></svg>
<svg style="position:absolute;left:85px;top:72.5px;" width="10" height="9" viewBox="0 0 10 9"><path d="M0.8 4.5 L3.8 7.8 L9.2 0.8" fill="none" stroke="#b8b8b8" stroke-width="1"/></svg>
<svg style="position:absolute;left:100px;top:72px;" width="12" height="11" viewBox="0 0 12 11"><text x="1" y="8.5" font-size="10.5" font-style="italic" fill="#555" font-family="Liberation Serif">f</text><text x="5" y="8.8" font-size="7.5" font-style="italic" fill="#555" font-family="Liberation Serif">x</text></svg>
<div style="left:56px;top:73px;width:1px;height:8px;border-left:1px dotted #ccc"></div>
<svg style="position:absolute;left:44px;top:76px;" width="3" height="2" viewBox="0 0 3 2"><path d="M0 0 L3 0 L1.5 2Z" fill="#555"/></svg>
<svg style="position:absolute;left:732.5px;top:75px;" width="6" height="4" viewBox="0 0 6 4"><path d="M0.8 0.8 L3 3 L5.2 0.8" fill="none" stroke="#444" stroke-width="1.2"/></svg>
<div style="left:0px;top:88px;width:733px;height:8px;background:#fff;border-bottom:1px solid #e0e0e0"></div>
<div style="left:23px;top:90px;width:1px;height:5px;background:#e4e4e4"></div>
<div class="t" style="left:12px;top:88px;width:11px;text-align:center;font-size:6.5px;line-height:8px;color:#444">A</div>
<div style="left:67px;top:90px;width:1px;height:5px;background:#e4e4e4"></div>
<div class="t" style="left:23px;top:88px;width:44px;text-align:center;font-size:6.5px;line-height:8px;color:#444">B</div>
<div style="left:126px;top:90px;width:1px;height:5px;background:#e4e4e4"></div>
<div class="t" style="left:67px;top:88px;width:59px;text-align:center;font-size:6.5px;line-height:8px;color:#444">C</div>
<div style="left:209px;top:90px;width:1px;height:5px;background:#e4e4e4"></div>
<div class="t" style="left:126px;top:88px;width:83px;text-align:center;font-size:6.5px;line-height:8px;color:#444">D</div>
<div style="left:303px;top:90px;width:1px;height:5px;background:#e4e4e4"></div>
<div class="t" style="left:209px;top:88px;width:94px;text-align:center;font-size:6.5px;line-height:8px;color:#444">E</div>
<div style="left:389px;top:90px;width:1px;height:5px;background:#e4e4e4"></div>
<div class="t" style="left:303px;top:88px;width:86px;text-align:center;font-size:6.5px;line-height:8px;color:#444">F</div>
<div style="left:468px;top:90px;width:1px;height:5px;background:#e4e4e4"></div>
<div class="t" style="left:389px;top:88px;width:79px;text-align:center;font-size:6.5px;line-height:8px;color:#444">G</div>
<div style="left:509px;top:90px;width:1px;height:5px;background:#e4e4e4"></div>
<div class="t" style="left:468px;top:88px;width:41px;text-align:center;font-size:6.5px;line-height:8px;color:#444">H</div>
<div style="left:566px;top:90px;width:1px;height:5px;background:#e4e4e4"></div>
<div class="t" style="left:509px;top:88px;width:57px;text-align:center;font-size:6.5px;line-height:8px;color:#444">I</div>
<div style="left:618px;top:90px;width:1px;height:5px;background:#e4e4e4"></div>
<div class="t" style="left:566px;top:88px;width:52px;text-align:center;font-size:6.5px;line-height:8px;color:#444">J</div>
<div style="left:661px;top:90px;width:1px;height:5px;background:#e4e4e4"></div>
<div class="t" style="left:618px;top:88px;width:43px;text-align:center;font-size:6.5px;line-height:8px;color:#444">K</div>
<div style="left:704px;top:90px;width:1px;height:5px;background:#e4e4e4"></div>
<div class="t" style="left:661px;top:88px;width:43px;text-align:center;font-size:6.5px;line-height:8px;color:#444">L</div>
<div style="left:733px;top:90px;width:1px;height:5px;background:#e4e4e4"></div>
<div class="t" style="left:704px;top:88px;width:29px;text-align:center;font-size:6.5px;line-height:8px;color:#444">M</div>
<svg style="position:absolute;left:5.5px;top:89.5px" width="5" height="5"><path d="M4.5 0.5 V4.5 H0.5Z" fill="#dcdcdc"/></svg>
<div style="left:11px;top:88px;width:1px;height:288px;background:#e2e2e2"></div>
<div style="left:1px;top:102px;width:10px;height:1px;background:#ececec"></div>
<div class="t" style="left:0;top:93.5px;width:12px;height:10px;text-align:center;font-size:6.6px;line-height:10px;color:#3a3a3a;transform:scaleX(0.82)">1</div>
<div style="left:1px;top:121.5px;width:10px;height:1px;background:#ececec"></div>
<div class="t" style="left:0;top:110px;width:12px;height:10px;text-align:center;font-size:6.6px;line-height:10px;color:#3a3a3a;transform:scaleX(0.82)">2</div>
<div style="left:1px;top:133px;width:10px;height:1px;background:#ececec"></div>
<div class="t" style="left:0;top:124.19999999999999px;width:12px;height:10px;text-align:center;font-size:6.6px;line-height:10px;color:#3a3a3a;transform:scaleX(0.82)">3</div>
<div style="left:1px;top:145px;width:10px;height:1px;background:#ececec"></div>
<div class="t" style="left:0;top:136.886px;width:12px;height:10px;text-align:center;font-size:6.6px;line-height:10px;color:#3a3a3a;transform:scaleX(0.82)">4</div>
<div style="left:1px;top:158px;width:10px;height:1px;background:#ececec"></div>
<div class="t" style="left:0;top:148.95px;width:12px;height:10px;text-align:center;font-size:6.6px;line-height:10px;color:#3a3a3a;transform:scaleX(0.82)">5</div>
<div style="left:1px;top:170px;width:10px;height:1px;background:#ececec"></div>
<div class="t" style="left:0;top:161.01399999999998px;width:12px;height:10px;text-align:center;font-size:6.6px;line-height:10px;color:#3a3a3a;transform:scaleX(0.82)">6</div>
<div style="left:1px;top:182px;width:10px;height:1px;background:#ececec"></div>
<div class="t" style="left:0;top:173.07799999999997px;width:12px;height:10px;text-align:center;font-size:6.6px;line-height:10px;color:#3a3a3a;transform:scaleX(0.82)">7</div>
<div style="left:1px;top:194px;width:10px;height:1px;background:#ececec"></div>
<div class="t" style="left:0;top:185.142px;width:12px;height:10px;text-align:center;font-size:6.6px;line-height:10px;color:#3a3a3a;transform:scaleX(0.82)">8</div>
<div style="left:1px;top:206px;width:10px;height:1px;background:#ececec"></div>
<div class="t" style="left:0;top:197.206px;width:12px;height:10px;text-align:center;font-size:6.6px;line-height:10px;color:#3a3a3a;transform:scaleX(0.82)">9</div>
<div style="left:1px;top:218px;width:10px;height:1px;background:#ececec"></div>
<div class="t" style="left:0;top:209.26999999999998px;width:12px;height:10px;text-align:center;font-size:6.6px;line-height:10px;color:#3a3a3a;transform:scaleX(0.82)">10</div>
<div style="left:1px;top:230px;width:10px;height:1px;background:#ececec"></div>
<div class="t" style="left:0;top:221.334px;width:12px;height:10px;text-align:center;font-size:6.6px;line-height:10px;color:#3a3a3a;transform:scaleX(0.82)">11</div>
<div style="left:1px;top:242px;width:10px;height:1px;background:#ececec"></div>
<div class="t" style="left:0;top:233.398px;width:12px;height:10px;text-align:center;font-size:6.6px;line-height:10px;color:#3a3a3a;transform:scaleX(0.82)">12</div>
<div style="left:1px;top:254px;width:10px;height:1px;background:#ececec"></div>
<div class="t" style="left:0;top:245.462px;width:12px;height:10px;text-align:center;font-size:6.6px;line-height:10px;color:#3a3a3a;transform:scaleX(0.82)">13</div>
<div style="left:1px;top:266px;width:10px;height:1px;background:#ececec"></div>
<div class="t" style="left:0;top:257.526px;width:12px;height:10px;text-align:center;font-size:6.6px;line-height:10px;color:#3a3a3a;transform:scaleX(0.82)">14</div>
<div style="left:1px;top:278px;width:10px;height:1px;background:#ececec"></div>
<div class="t" style="left:0;top:269.59px;width:12px;height:10px;text-align:center;font-size:6.6px;line-height:10px;color:#3a3a3a;transform:scaleX(0.82)">15</div>
<div style="left:1px;top:290px;width:10px;height:1px;background:#ececec"></div>
<div class="t" style="left:0;top:281.654px;width:12px;height:10px;text-align:center;font-size:6.6px;line-height:10px;color:#3a3a3a;transform:scaleX(0.82)">16</div>
<div style="left:1px;top:302px;width:10px;height:1px;background:#ececec"></div>
<div class="t" style="left:0;top:293.718px;width:12px;height:10px;text-align:center;font-size:6.6px;line-height:10px;color:#3a3a3a;transform:scaleX(0.82)">17</div>
<div style="left:1px;top:314px;width:10px;height:1px;background:#ececec"></div>
<div class="t" style="left:0;top:305.782px;width:12px;height:10px;text-align:center;font-size:6.6px;line-height:10px;color:#3a3a3a;transform:scaleX(0.82)">18</div>
<div style="left:1px;top:326px;width:10px;height:1px;background:#ececec"></div>
<div class="t" style="left:0;top:317.846px;width:12px;height:10px;text-align:center;font-size:6.6px;line-height:10px;color:#3a3a3a;transform:scaleX(0.82)">19</div>
<div style="left:1px;top:339px;width:10px;height:1px;background:#ececec"></div>
<div class="t" style="left:0;top:329.91px;width:12px;height:10px;text-align:center;font-size:6.6px;line-height:10px;color:#3a3a3a;transform:scaleX(0.82)">20</div>
<div style="left:1px;top:351px;width:10px;height:1px;background:#ececec"></div>
<div class="t" style="left:0;top:341.974px;width:12px;height:10px;text-align:center;font-size:6.6px;line-height:10px;color:#3a3a3a;transform:scaleX(0.82)">21</div>
<div style="left:1px;top:363px;width:10px;height:1px;background:#ececec"></div>
<div class="t" style="left:0;top:354.03799999999995px;width:12px;height:10px;text-align:center;font-size:6.6px;line-height:10px;color:#3a3a3a;transform:scaleX(0.82)">22</div>
<div style="left:1px;top:375px;width:10px;height:1px;background:#ececec"></div>
<div class="t" style="left:0;top:366.102px;width:12px;height:10px;text-align:center;font-size:6.6px;line-height:10px;color:#3a3a3a;transform:scaleX(0.82)">23</div>
<div class="t" style="left:31.5px;top:102.6px;font-size:13.4px;line-height:17px;color:#435c88;transform:scaleX(0.96);transform-origin:0 0">[Project] Process List</div>
<div style="left:23px;top:122px;width:681px;height:12px;background:#d9d9dc;border-top:2px solid #a9b6c9;border-bottom:1.5px solid #97a7bf"></div>
<div class="t" style="left:33px;top:124px;font-size:7.2px;line-height:9px;color:#222;transform:scaleX(0.97);transform-origin:0 0">Index #</div>
<div class="t" style="left:68px;top:124px;font-size:7.2px;line-height:9px;color:#222;transform:scaleX(0.97);transform-origin:0 0">Process Area</div>
<div class="t" style="left:132px;top:124px;font-size:7.2px;line-height:9px;color:#222;transform:scaleX(0.97);transform-origin:0 0">Process Flow #</div>
<div class="t" style="left:217px;top:124px;font-size:7.2px;line-height:9px;color:#222;transform:scaleX(0.97);transform-origin:0 0">Process Narrative #</div>
<div class="t" style="left:310px;top:124px;font-size:7.2px;line-height:9px;color:#222;transform:scaleX(0.97);transform-origin:0 0">Key Stroke Level</div>
<div class="t" style="left:397px;top:124px;font-size:7.2px;line-height:9px;color:#222;transform:scaleX(0.97);transform-origin:0 0">Process Owner</div>
<div class="t" style="left:475px;top:124px;font-size:7.2px;line-height:9px;color:#222;transform:scaleX(0.97);transform-origin:0 0">SOX</div>
<div class="t" style="left:516px;top:124px;font-size:7.2px;line-height:9px;color:#222;transform:scaleX(0.97);transform-origin:0 0">Forms / Docs</div>
<div class="t" style="left:573px;top:124px;font-size:7.2px;line-height:9px;color:#222;transform:scaleX(0.97);transform-origin:0 0">SME</div>
<div class="t" style="left:627px;top:124px;font-size:7.2px;line-height:9px;color:#222;transform:scaleX(0.97);transform-origin:0 0">Status</div>
<div class="t" style="left:669px;top:124px;font-size:7.2px;line-height:9px;color:#222;transform:scaleX(0.97);transform-origin:0 0">Version</div>
<div class="t" style="left:23px;top:134.0px;width:44px;text-align:center;font-size:7px;line-height:12px;color:#1a1a1a;transform:scaleX(0.86)">1</div>
<div class="t" style="left:68px;top:134.0px;font-size:7px;line-height:12px;color:#1a1a1a;transform:scaleX(0.86);transform-origin:0 0">Order Management</div>
<div class="t" style="left:132px;top:134.0px;font-size:7px;line-height:12px;color:#1a1a1a;transform:scaleX(0.86);transform-origin:0 0">PF_CL_EU_L1_PRO_001</div>
<div class="t" style="left:216px;top:134.0px;font-size:7px;line-height:12px;color:#1a1a1a;transform:scaleX(0.86);transform-origin:0 0">PF_CL_USA_L1_PRO_0025</div>
<div class="t" style="left:310px;top:134.0px;font-size:7px;line-height:12px;color:#1a1a1a;transform:scaleX(0.86);transform-origin:0 0">KS_CL_US_SAPCRM_0001</div>
<div class="t" style="left:396px;top:134.0px;font-size:7px;line-height:12px;color:#1a1a1a;transform:scaleX(0.86);transform-origin:0 0">Process Owner Name</div>
<div class="t" style="left:475px;top:134.0px;font-size:7px;line-height:12px;color:#1a1a1a;transform:scaleX(0.86);transform-origin:0 0">SOX #</div>
<div class="t" style="left:515px;top:134.0px;font-size:7px;line-height:12px;color:#1a1a1a;transform:scaleX(0.86);transform-origin:0 0">Document #</div>
<div class="t" style="left:572px;top:134.0px;font-size:7px;line-height:12px;color:#1a1a1a;transform:scaleX(0.86);transform-origin:0 0">SME Initials</div>
<div style="left:618px;top:133px;width:43px;height:12px;background:#c6efce"></div>
<div class="t" style="left:625px;top:134.0px;font-size:7px;line-height:12px;color:#1c7530;transform:scaleX(0.86);transform-origin:0 0">Draft</div>
<div style="left:662px;top:134px;width:8px;height:10px;background:#6190cc"></div>
<div class="t" style="left:668px;top:133.5px;font-size:7px;line-height:12px;color:#1a1a1a;transform:scaleX(0.86);transform-origin:0 0">1</div>
<div style="left:23px;top:145px;width:681px;height:13px;background:#eeecf2;border-top:1px solid #e4e2ea;border-bottom:1px solid #e4e2ea"></div>
<div class="t" style="left:23px;top:146.0px;width:44px;text-align:center;font-size:7px;line-height:12px;color:#1a1a1a;transform:scaleX(0.86)">2</div>
<div class="t" style="left:68px;top:146.0px;font-size:7px;line-height:12px;color:#1a1a1a;transform:scaleX(0.86);transform-origin:0 0">Shipping</div>
<div class="t" style="left:132px;top:146.0px;font-size:7px;line-height:12px;color:#1a1a1a;transform:scaleX(0.86);transform-origin:0 0">PF_CL_EU_L1_PRO_002</div>
<div class="t" style="left:216px;top:146.0px;font-size:7px;line-height:12px;color:#1a1a1a;transform:scaleX(0.86);transform-origin:0 0">PF_CL_USA_L1_PRO_0020</div>
<div class="t" style="left:310px;top:146.0px;font-size:7px;line-height:12px;color:#1a1a1a;transform:scaleX(0.86);transform-origin:0 0">KS_CL_US_SAPCRM_0002</div>
<div class="t" style="left:396px;top:146.0px;font-size:7px;line-height:12px;color:#1a1a1a;transform:scaleX(0.86);transform-origin:0 0">Process Owner Name</div>
<div class="t" style="left:475px;top:146.0px;font-size:7px;line-height:12px;color:#1a1a1a;transform:scaleX(0.86);transform-origin:0 0">SOX #</div>
<div class="t" style="left:515px;top:146.0px;font-size:7px;line-height:12px;color:#1a1a1a;transform:scaleX(0.86);transform-origin:0 0">Document #</div>
<div class="t" style="left:572px;top:146.0px;font-size:7px;line-height:12px;color:#1a1a1a;transform:scaleX(0.86);transform-origin:0 0">SME Initials</div>
<div style="left:618px;top:145px;width:43px;height:12px;background:#ffe99a"></div>
<div class="t" style="left:625px;top:146.0px;font-size:7px;line-height:12px;color:#ad8430;transform:scaleX(0.86);transform-origin:0 0">Review</div>
<div style="left:662px;top:146px;width:9px;height:10px;background:#6190cc"></div>
<div class="t" style="left:668px;top:145.5px;font-size:7px;line-height:12px;color:#1a1a1a;transform:scaleX(0.86);transform-origin:0 0">1.1</div>
<div class="t" style="left:23px;top:158.0px;width:44px;text-align:center;font-size:7px;line-height:12px;color:#1a1a1a;transform:scaleX(0.86)">3</div>
<div class="t" style="left:68px;top:158.0px;font-size:7px;line-height:12px;color:#1a1a1a;transform:scaleX(0.86);transform-origin:0 0">Reporting</div>
<div class="t" style="left:132px;top:158.0px;font-size:7px;line-height:12px;color:#1a1a1a;transform:scaleX(0.86);transform-origin:0 0">PF_CL_EU_L1_PRO_003</div>
<div class="t" style="left:216px;top:158.0px;font-size:7px;line-height:12px;color:#1a1a1a;transform:scaleX(0.86);transform-origin:0 0">PF_CL_USA_L1_PRO_0024</div>
<div class="t" style="left:310px;top:158.0px;font-size:7px;line-height:12px;color:#1a1a1a;transform:scaleX(0.86);transform-origin:0 0">KS_CL_US_SAPCRM_0003</div>
<div class="t" style="left:396px;top:158.0px;font-size:7px;line-height:12px;color:#1a1a1a;transform:scaleX(0.86);transform-origin:0 0">Process Owner Name</div>
<div class="t" style="left:475px;top:158.0px;font-size:7px;line-height:12px;color:#1a1a1a;transform:scaleX(0.86);transform-origin:0 0">SOX #</div>
<div class="t" style="left:515px;top:158.0px;font-size:7px;line-height:12px;color:#1a1a1a;transform:scaleX(0.86);transform-origin:0 0">Document #</div>
<div class="t" style="left:572px;top:158.0px;font-size:7px;line-height:12px;color:#1a1a1a;transform:scaleX(0.86);transform-origin:0 0">SME Initials</div>
<div style="left:618px;top:157px;width:43px;height:12px;background:#f6cdd3"></div>
<div class="t" style="left:625px;top:158.0px;font-size:7px;line-height:12px;color:#cc2a44;transform:scaleX(0.86);transform-origin:0 0">Approved</div>
<div style="left:662px;top:158px;width:10px;height:10px;background:#6190cc"></div>
<div class="t" style="left:668px;top:157.5px;font-size:7px;line-height:12px;color:#1a1a1a;transform:scaleX(0.86);transform-origin:0 0">1.2</div>
<div style="left:23px;top:169px;width:681px;height:13px;background:#eeecf2;border-top:1px solid #e4e2ea;border-bottom:1px solid #e4e2ea"></div>
<div class="t" style="left:23px;top:170.0px;width:44px;text-align:center;font-size:7px;line-height:12px;color:#1a1a1a;transform:scaleX(0.86)">4</div>
<div class="t" style="left:68px;top:170.0px;font-size:7px;line-height:12px;color:#1a1a1a;transform:scaleX(0.86);transform-origin:0 0">Customer Service</div>
<div class="t" style="left:132px;top:170.0px;font-size:7px;line-height:12px;color:#1a1a1a;transform:scaleX(0.86);transform-origin:0 0">PF_CL_EU_L1_PRO_004</div>
<div class="t" style="left:216px;top:170.0px;font-size:7px;line-height:12px;color:#1a1a1a;transform:scaleX(0.86);transform-origin:0 0">PF_CL_USA_L1_O2C_0011</div>
<div class="t" style="left:310px;top:170.0px;font-size:7px;line-height:12px;color:#1a1a1a;transform:scaleX(0.86);transform-origin:0 0">KS_CL_US_SAPCRM_0004</div>
<div class="t" style="left:396px;top:170.0px;font-size:7px;line-height:12px;color:#1a1a1a;transform:scaleX(0.86);transform-origin:0 0">Process Owner Name</div>
<div class="t" style="left:475px;top:170.0px;font-size:7px;line-height:12px;color:#1a1a1a;transform:scaleX(0.86);transform-origin:0 0">SOX #</div>
<div class="t" style="left:515px;top:170.0px;font-size:7px;line-height:12px;color:#1a1a1a;transform:scaleX(0.86);transform-origin:0 0">Document #</div>
<div class="t" style="left:572px;top:170.0px;font-size:7px;line-height:12px;color:#1a1a1a;transform:scaleX(0.86);transform-origin:0 0">SME Initials</div>
<div style="left:618px;top:169px;width:43px;height:12px;background:#c6efce"></div>
<div class="t" style="left:625px;top:170.0px;font-size:7px;line-height:12px;color:#1c7530;transform:scaleX(0.86);transform-origin:0 0">Draft</div>
<div style="left:662px;top:170px;width:16px;height:10px;background:#6190cc"></div>
<div class="t" style="left:668px;top:169.5px;font-size:7px;line-height:12px;color:#1a1a1a;transform:scaleX(0.86);transform-origin:0 0">2</div>
<div class="t" style="left:23px;top:182.0px;width:44px;text-align:center;font-size:7px;line-height:12px;color:#1a1a1a;transform:scaleX(0.86)">5</div>
<div class="t" style="left:68px;top:182.0px;font-size:7px;line-height:12px;color:#1a1a1a;transform:scaleX(0.86);transform-origin:0 0">Human Resources</div>
<div class="t" style="left:132px;top:182.0px;font-size:7px;line-height:12px;color:#1a1a1a;transform:scaleX(0.86);transform-origin:0 0">PF_CL_EU_L1_PRO_005</div>
<div class="t" style="left:216px;top:182.0px;font-size:7px;line-height:12px;color:#1a1a1a;transform:scaleX(0.86);transform-origin:0 0">PF_CL_USA_L1_PRO_0011</div>
<div class="t" style="left:310px;top:182.0px;font-size:7px;line-height:12px;color:#1a1a1a;transform:scaleX(0.86);transform-origin:0 0">KS_CL_US_SAPCRM_0005</div>
<div class="t" style="left:396px;top:182.0px;font-size:7px;line-height:12px;color:#1a1a1a;transform:scaleX(0.86);transform-origin:0 0">Process Owner Name</div>
<div class="t" style="left:475px;top:182.0px;font-size:7px;line-height:12px;color:#1a1a1a;transform:scaleX(0.86);transform-origin:0 0">SOX #</div>
<div class="t" style="left:515px;top:182.0px;font-size:7px;line-height:12px;color:#1a1a1a;transform:scaleX(0.86);transform-origin:0 0">Document #</div>
<div class="t" style="left:572px;top:182.0px;font-size:7px;line-height:12px;color:#1a1a1a;transform:scaleX(0.86);transform-origin:0 0">SME Initials</div>
<div style="left:618px;top:181px;width:43px;height:12px;background:#ffe99a"></div>
<div class="t" style="left:625px;top:182.0px;font-size:7px;line-height:12px;color:#ad8430;transform:scaleX(0.86);transform-origin:0 0">Review</div>
<div style="left:662px;top:182px;width:17px;height:10px;background:#6190cc"></div>
<div class="t" style="left:668px;top:181.5px;font-size:7px;line-height:12px;color:#1a1a1a;transform:scaleX(0.86);transform-origin:0 0">2.1</div>
<div style="left:23px;top:193px;width:681px;height:13px;background:#eeecf2;border-top:1px solid #e4e2ea;border-bottom:1px solid #e4e2ea"></div>
<div class="t" style="left:23px;top:194.0px;width:44px;text-align:center;font-size:7px;line-height:12px;color:#1a1a1a;transform:scaleX(0.86)">6</div>
<div class="t" style="left:68px;top:194.0px;font-size:7px;line-height:12px;color:#1a1a1a;transform:scaleX(0.86);transform-origin:0 0">Call Centre</div>
<div class="t" style="left:132px;top:194.0px;font-size:7px;line-height:12px;color:#1a1a1a;transform:scaleX(0.86);transform-origin:0 0">PF_CL_EU_L1_PRO_006</div>
<div class="t" style="left:216px;top:194.0px;font-size:7px;line-height:12px;color:#1a1a1a;transform:scaleX(0.86);transform-origin:0 0">PF_CL_USA_L1_O2C_0004</div>
<div class="t" style="left:310px;top:194.0px;font-size:7px;line-height:12px;color:#1a1a1a;transform:scaleX(0.86);transform-origin:0 0">KS_CL_US_SAPCRM_0006</div>
<div class="t" style="left:396px;top:194.0px;font-size:7px;line-height:12px;color:#1a1a1a;transform:scaleX(0.86);transform-origin:0 0">Process Owner Name</div>
<div class="t" style="left:475px;top:194.0px;font-size:7px;line-height:12px;color:#1a1a1a;transform:scaleX(0.86);transform-origin:0 0">SOX #</div>
<div class="t" style="left:515px;top:194.0px;font-size:7px;line-height:12px;color:#1a1a1a;transform:scaleX(0.86);transform-origin:0 0">Document #</div>
<div class="t" style="left:572px;top:194.0px;font-size:7px;line-height:12px;color:#1a1a1a;transform:scaleX(0.86);transform-origin:0 0">SME Initials</div>
<div style="left:618px;top:194px;width:43px;height:12px;background:#f6cdd3"></div>
<div class="t" style="left:625px;top:194.0px;font-size:7px;line-height:12px;color:#cc2a44;transform:scaleX(0.86);transform-origin:0 0">Approved</div>
<div style="left:662px;top:195px;width:18px;height:10px;background:#6190cc"></div>
<div class="t" style="left:668px;top:193.5px;font-size:7px;line-height:12px;color:#1a1a1a;transform:scaleX(0.86);transform-origin:0 0">2.2</div>
<div class="t" style="left:23px;top:206.0px;width:44px;text-align:center;font-size:7px;line-height:12px;color:#1a1a1a;transform:scaleX(0.86)">7</div>
<div class="t" style="left:68px;top:206.0px;font-size:7px;line-height:12px;color:#1a1a1a;transform:scaleX(0.86);transform-origin:0 0">R&amp;D</div>
<div class="t" style="left:132px;top:206.0px;font-size:7px;line-height:12px;color:#1a1a1a;transform:scaleX(0.86);transform-origin:0 0">PF_CL_EU_L1_PRO_007</div>
<div class="t" style="left:216px;top:206.0px;font-size:7px;line-height:12px;color:#1a1a1a;transform:scaleX(0.86);transform-origin:0 0">PF_CL_USA_L1_PRO_0009</div>
<div class="t" style="left:310px;top:206.0px;font-size:7px;line-height:12px;color:#1a1a1a;transform:scaleX(0.86);transform-origin:0 0">KS_CL_US_SAPCRM_0007</div>
<div class="t" style="left:396px;top:206.0px;font-size:7px;line-height:12px;color:#1a1a1a;transform:scaleX(0.86);transform-origin:0 0">Process Owner Name</div>
<div class="t" style="left:475px;top:206.0px;font-size:7px;line-height:12px;color:#1a1a1a;transform:scaleX(0.86);transform-origin:0 0">SOX #</div>
<div class="t" style="left:515px;top:206.0px;font-size:7px;line-height:12px;color:#1a1a1a;transform:scaleX(0.86);transform-origin:0 0">Document #</div>
<div class="t" style="left:572px;top:206.0px;font-size:7px;line-height:12px;color:#1a1a1a;transform:scaleX(0.86);transform-origin:0 0">SME Initials</div>
<div style="left:618px;top:206px;width:43px;height:12px;background:#c6efce"></div>
<div class="t" style="left:625px;top:206.0px;font-size:7px;line-height:12px;color:#1c7530;transform:scaleX(0.86);transform-origin:0 0">Draft</div>
<div style="left:662px;top:207px;width:24px;height:10px;background:#6190cc"></div>
<div class="t" style="left:668px;top:205.5px;font-size:7px;line-height:12px;color:#1a1a1a;transform:scaleX(0.86);transform-origin:0 0">3</div>
<div style="left:23px;top:217px;width:681px;height:13px;background:#eeecf2;border-top:1px solid #e4e2ea;border-bottom:1px solid #e4e2ea"></div>
<div class="t" style="left:23px;top:218.0px;width:44px;text-align:center;font-size:7px;line-height:12px;color:#1a1a1a;transform:scaleX(0.86)">8</div>
<div class="t" style="left:68px;top:218.0px;font-size:7px;line-height:12px;color:#1a1a1a;transform:scaleX(0.86);transform-origin:0 0">Testing</div>
<div class="t" style="left:132px;top:218.0px;font-size:7px;line-height:12px;color:#1a1a1a;transform:scaleX(0.86);transform-origin:0 0">PF_CL_EU_L1_PRO_008</div>
<div class="t" style="left:216px;top:218.0px;font-size:7px;line-height:12px;color:#1a1a1a;transform:scaleX(0.86);transform-origin:0 0">PF_CL_USA_L1_PRO_0022</div>
<div class="t" style="left:310px;top:218.0px;font-size:7px;line-height:12px;color:#1a1a1a;transform:scaleX(0.86);transform-origin:0 0">KS_CL_US_SAPCRM_0008</div>
<div class="t" style="left:396px;top:218.0px;font-size:7px;line-height:12px;color:#1a1a1a;transform:scaleX(0.86);transform-origin:0 0">Process Owner Name</div>
<div class="t" style="left:475px;top:218.0px;font-size:7px;line-height:12px;color:#1a1a1a;transform:scaleX(0.86);transform-origin:0 0">SOX #</div>
<div class="t" style="left:515px;top:218.0px;font-size:7px;line-height:12px;color:#1a1a1a;transform:scaleX(0.86);transform-origin:0 0">Document #</div>
<div class="t" style="left:572px;top:218.0px;font-size:7px;line-height:12px;color:#1a1a1a;transform:scaleX(0.86);transform-origin:0 0">SME Initials</div>
<div style="left:618px;top:218px;width:43px;height:12px;background:#ffe99a"></div>
<div class="t" style="left:625px;top:218.0px;font-size:7px;line-height:12px;color:#ad8430;transform:scaleX(0.86);transform-origin:0 0">Review</div>
<div style="left:662px;top:219px;width:8px;height:10px;background:#6190cc"></div>
<div class="t" style="left:668px;top:217.5px;font-size:7px;line-height:12px;color:#1a1a1a;transform:scaleX(0.86);transform-origin:0 0">1</div>
<div class="t" style="left:23px;top:230.5px;width:44px;text-align:center;font-size:7px;line-height:12px;color:#1a1a1a;transform:scaleX(0.86)">9</div>
<div class="t" style="left:68px;top:230.5px;font-size:7px;line-height:12px;color:#1a1a1a;transform:scaleX(0.86);transform-origin:0 0">Finance</div>
<div class="t" style="left:132px;top:230.5px;font-size:7px;line-height:12px;color:#1a1a1a;transform:scaleX(0.86);transform-origin:0 0">PF_CL_EU_L1_PRO_009</div>
<div class="t" style="left:216px;top:230.5px;font-size:7px;line-height:12px;color:#1a1a1a;transform:scaleX(0.86);transform-origin:0 0">PF_CL_USA_L1_PRO_0012</div>
<div class="t" style="left:310px;top:230.5px;font-size:7px;line-height:12px;color:#1a1a1a;transform:scaleX(0.86);transform-origin:0 0">KS_CL_US_SAPCRM_0009</div>
<div class="t" style="left:396px;top:230.5px;font-size:7px;line-height:12px;color:#1a1a1a;transform:scaleX(0.86);transform-origin:0 0">Process Owner Name</div>
<div class="t" style="left:475px;top:230.5px;font-size:7px;line-height:12px;color:#1a1a1a;transform:scaleX(0.86);transform-origin:0 0">SOX #</div>
<div class="t" style="left:515px;top:230.5px;font-size:7px;line-height:12px;color:#1a1a1a;transform:scaleX(0.86);transform-origin:0 0">Document #</div>
<div class="t" style="left:572px;top:230.5px;font-size:7px;line-height:12px;color:#1a1a1a;transform:scaleX(0.86);transform-origin:0 0">SME Initials</div>
<div style="left:618px;top:230px;width:43px;height:12px;background:#f6cdd3"></div>
<div class="t" style="left:625px;top:230.5px;font-size:7px;line-height:12px;color:#cc2a44;transform:scaleX(0.86);transform-origin:0 0">Approved</div>
<div style="left:662px;top:231px;width:9px;height:10px;background:#6190cc"></div>
<div class="t" style="left:668px;top:230.0px;font-size:7px;line-height:12px;color:#1a1a1a;transform:scaleX(0.86);transform-origin:0 0">1.1</div>
<div style="left:23px;top:241px;width:681px;height:13px;background:#eeecf2;border-top:1px solid #e4e2ea;border-bottom:1px solid #e4e2ea"></div>
<div class="t" style="left:23px;top:242.5px;width:44px;text-align:center;font-size:7px;line-height:12px;color:#1a1a1a;transform:scaleX(0.86)">10</div>
<div class="t" style="left:68px;top:242.5px;font-size:7px;line-height:12px;color:#1a1a1a;transform:scaleX(0.86);transform-origin:0 0">Security</div>
<div class="t" style="left:132px;top:242.5px;font-size:7px;line-height:12px;color:#1a1a1a;transform:scaleX(0.86);transform-origin:0 0">PF_CL_EU_L1_PRO_010</div>
<div class="t" style="left:216px;top:242.5px;font-size:7px;line-height:12px;color:#1a1a1a;transform:scaleX(0.86);transform-origin:0 0">PF_CL_USA_L1O2I_0020</div>
<div class="t" style="left:310px;top:242.5px;font-size:7px;line-height:12px;color:#1a1a1a;transform:scaleX(0.86);transform-origin:0 0">KS_CL_US_SAPCRM_0010</div>
<div class="t" style="left:396px;top:242.5px;font-size:7px;line-height:12px;color:#1a1a1a;transform:scaleX(0.86);transform-origin:0 0">Process Owner Name</div>
<div class="t" style="left:475px;top:242.5px;font-size:7px;line-height:12px;color:#1a1a1a;transform:scaleX(0.86);transform-origin:0 0">SOX #</div>
<div class="t" style="left:515px;top:242.5px;font-size:7px;line-height:12px;color:#1a1a1a;transform:scaleX(0.86);transform-origin:0 0">Document #</div>
<div class="t" style="left:572px;top:242.5px;font-size:7px;line-height:12px;color:#1a1a1a;transform:scaleX(0.86);transform-origin:0 0">SME Initials</div>
<div style="left:618px;top:242px;width:43px;height:12px;background:#c6efce"></div>
<div class="t" style="left:625px;top:242.5px;font-size:7px;line-height:12px;color:#1c7530;transform:scaleX(0.86);transform-origin:0 0">Draft</div>
<div style="left:662px;top:243px;width:10px;height:10px;background:#6190cc"></div>
<div class="t" style="left:668px;top:242.0px;font-size:7px;line-height:12px;color:#1a1a1a;transform:scaleX(0.86);transform-origin:0 0">1.2</div>
<div class="t" style="left:23px;top:254.5px;width:44px;text-align:center;font-size:7px;line-height:12px;color:#1a1a1a;transform:scaleX(0.86)">11</div>
<div class="t" style="left:68px;top:254.5px;font-size:7px;line-height:12px;color:#1a1a1a;transform:scaleX(0.86);transform-origin:0 0">Order Management</div>
<div class="t" style="left:132px;top:254.5px;font-size:7px;line-height:12px;color:#1a1a1a;transform:scaleX(0.86);transform-origin:0 0">PF_CL_EU_L1_PRO_011</div>
<div class="t" style="left:216px;top:254.5px;font-size:7px;line-height:12px;color:#1a1a1a;transform:scaleX(0.86);transform-origin:0 0">PF_CL_USA_L1_PRO_0025</div>
<div class="t" style="left:310px;top:254.5px;font-size:7px;line-height:12px;color:#1a1a1a;transform:scaleX(0.86);transform-origin:0 0">KS_CL_US_SAPCRM_0011</div>
<div class="t" style="left:396px;top:254.5px;font-size:7px;line-height:12px;color:#1a1a1a;transform:scaleX(0.86);transform-origin:0 0">Process Owner Name</div>
<div class="t" style="left:475px;top:254.5px;font-size:7px;line-height:12px;color:#1a1a1a;transform:scaleX(0.86);transform-origin:0 0">SOX #</div>
<div class="t" style="left:515px;top:254.5px;font-size:7px;line-height:12px;color:#1a1a1a;transform:scaleX(0.86);transform-origin:0 0">Document #</div>
<div class="t" style="left:572px;top:254.5px;font-size:7px;line-height:12px;color:#1a1a1a;transform:scaleX(0.86);transform-origin:0 0">SME Initials</div>
<div style="left:618px;top:254px;width:43px;height:12px;background:#ffe99a"></div>
<div class="t" style="left:625px;top:254.5px;font-size:7px;line-height:12px;color:#ad8430;transform:scaleX(0.86);transform-origin:0 0">Review</div>
<div style="left:662px;top:255px;width:16px;height:10px;background:#6190cc"></div>
<div class="t" style="left:668px;top:254.0px;font-size:7px;line-height:12px;color:#1a1a1a;transform:scaleX(0.86);transform-origin:0 0">2</div>
<div style="left:23px;top:265px;width:681px;height:13px;background:#eeecf2;border-top:1px solid #e4e2ea;border-bottom:1px solid #e4e2ea"></div>
<div class="t" style="left:23px;top:266.5px;width:44px;text-align:center;font-size:7px;line-height:12px;color:#1a1a1a;transform:scaleX(0.86)">12</div>
<div class="t" style="left:68px;top:266.5px;font-size:7px;line-height:12px;color:#1a1a1a;transform:scaleX(0.86);transform-origin:0 0">Shipping</div>
<div class="t" style="left:132px;top:266.5px;font-size:7px;line-height:12px;color:#1a1a1a;transform:scaleX(0.86);transform-origin:0 0">PF_CL_EU_L1_PRO_012</div>
<div class="t" style="left:216px;top:266.5px;font-size:7px;line-height:12px;color:#1a1a1a;transform:scaleX(0.86);transform-origin:0 0">PF_CL_USA_L1_PRO_0020</div>
<div class="t" style="left:310px;top:266.5px;font-size:7px;line-height:12px;color:#1a1a1a;transform:scaleX(0.86);transform-origin:0 0">KS_CL_US_SAPCRM_0012</div>
<div class="t" style="left:396px;top:266.5px;font-size:7px;line-height:12px;color:#1a1a1a;transform:scaleX(0.86);transform-origin:0 0">Process Owner Name</div>
<div class="t" style="left:475px;top:266.5px;font-size:7px;line-height:12px;color:#1a1a1a;transform:scaleX(0.86);transform-origin:0 0">SOX #</div>
<div class="t" style="left:515px;top:266.5px;font-size:7px;line-height:12px;color:#1a1a1a;transform:scaleX(0.86);transform-origin:0 0">Document #</div>
<div class="t" style="left:572px;top:266.5px;font-size:7px;line-height:12px;color:#1a1a1a;transform:scaleX(0.86);transform-origin:0 0">SME Initials</div>
<div style="left:618px;top:266px;width:43px;height:12px;background:#c6efce"></div>
<div class="t" style="left:625px;top:266.5px;font-size:7px;line-height:12px;color:#1c7530;transform:scaleX(0.86);transform-origin:0 0">Draft</div>
<div style="left:662px;top:267px;width:17px;height:10px;background:#6190cc"></div>
<div class="t" style="left:668px;top:266.0px;font-size:7px;line-height:12px;color:#1a1a1a;transform:scaleX(0.86);transform-origin:0 0">2.1</div>
<div class="t" style="left:23px;top:278.5px;width:44px;text-align:center;font-size:7px;line-height:12px;color:#1a1a1a;transform:scaleX(0.86)">13</div>
<div class="t" style="left:68px;top:278.5px;font-size:7px;line-height:12px;color:#1a1a1a;transform:scaleX(0.86);transform-origin:0 0">Reporting</div>
<div class="t" style="left:132px;top:278.5px;font-size:7px;line-height:12px;color:#1a1a1a;transform:scaleX(0.86);transform-origin:0 0">PF_CL_EU_L1_PRO_013</div>
<div class="t" style="left:216px;top:278.5px;font-size:7px;line-height:12px;color:#1a1a1a;transform:scaleX(0.86);transform-origin:0 0">PF_CL_USA_L1_PRO_0024</div>
<div class="t" style="left:310px;top:278.5px;font-size:7px;line-height:12px;color:#1a1a1a;transform:scaleX(0.86);transform-origin:0 0">KS_CL_US_SAPCRM_0013</div>
<div class="t" style="left:396px;top:278.5px;font-size:7px;line-height:12px;color:#1a1a1a;transform:scaleX(0.86);transform-origin:0 0">Process Owner Name</div>
<div class="t" style="left:475px;top:278.5px;font-size:7px;line-height:12px;color:#1a1a1a;transform:scaleX(0.86);transform-origin:0 0">SOX #</div>
<div class="t" style="left:515px;top:278.5px;font-size:7px;line-height:12px;color:#1a1a1a;transform:scaleX(0.86);transform-origin:0 0">Document #</div>
<div class="t" style="left:572px;top:278.5px;font-size:7px;line-height:12px;color:#1a1a1a;transform:scaleX(0.86);transform-origin:0 0">SME Initials</div>
<div style="left:618px;top:278px;width:43px;height:12px;background:#ffe99a"></div>
<div class="t" style="left:625px;top:278.5px;font-size:7px;line-height:12px;color:#ad8430;transform:scaleX(0.86);transform-origin:0 0">Review</div>
<div style="left:662px;top:279px;width:18px;height:10px;background:#6190cc"></div>
<div class="t" style="left:668px;top:278.0px;font-size:7px;line-height:12px;color:#1a1a1a;transform:scaleX(0.86);transform-origin:0 0">2.2</div>
<div style="left:23px;top:290px;width:681px;height:13px;background:#eeecf2;border-top:1px solid #e4e2ea;border-bottom:1px solid #e4e2ea"></div>
<div class="t" style="left:23px;top:290.5px;width:44px;text-align:center;font-size:7px;line-height:12px;color:#1a1a1a;transform:scaleX(0.86)">14</div>
<div class="t" style="left:68px;top:290.5px;font-size:7px;line-height:12px;color:#1a1a1a;transform:scaleX(0.86);transform-origin:0 0">Customer Service</div>
<div class="t" style="left:132px;top:290.5px;font-size:7px;line-height:12px;color:#1a1a1a;transform:scaleX(0.86);transform-origin:0 0">PF_CL_EU_L1_PRO_014</div>
<div class="t" style="left:216px;top:290.5px;font-size:7px;line-height:12px;color:#1a1a1a;transform:scaleX(0.86);transform-origin:0 0">PF_CL_USA_L1_O2C_0011</div>
<div class="t" style="left:310px;top:290.5px;font-size:7px;line-height:12px;color:#1a1a1a;transform:scaleX(0.86);transform-origin:0 0">KS_CL_US_SAPCRM_0014</div>
<div class="t" style="left:396px;top:290.5px;font-size:7px;line-height:12px;color:#1a1a1a;transform:scaleX(0.86);transform-origin:0 0">Process Owner Name</div>
<div class="t" style="left:475px;top:290.5px;font-size:7px;line-height:12px;color:#1a1a1a;transform:scaleX(0.86);transform-origin:0 0">SOX #</div>
<div class="t" style="left:515px;top:290.5px;font-size:7px;line-height:12px;color:#1a1a1a;transform:scaleX(0.86);transform-origin:0 0">Document #</div>
<div class="t" style="left:572px;top:290.5px;font-size:7px;line-height:12px;color:#1a1a1a;transform:scaleX(0.86);transform-origin:0 0">SME Initials</div>
<div style="left:618px;top:290px;width:43px;height:12px;background:#f6cdd3"></div>
<div class="t" style="left:625px;top:290.5px;font-size:7px;line-height:12px;color:#cc2a44;transform:scaleX(0.86);transform-origin:0 0">Approved</div>
<div style="left:662px;top:291px;width:24px;height:10px;background:#6190cc"></div>
<div class="t" style="left:668px;top:290.0px;font-size:7px;line-height:12px;color:#1a1a1a;transform:scaleX(0.86);transform-origin:0 0">3</div>
<div class="t" style="left:23px;top:302.5px;width:44px;text-align:center;font-size:7px;line-height:12px;color:#1a1a1a;transform:scaleX(0.86)">15</div>
<div class="t" style="left:68px;top:302.5px;font-size:7px;line-height:12px;color:#1a1a1a;transform:scaleX(0.86);transform-origin:0 0">Human Resources</div>
<div class="t" style="left:132px;top:302.5px;font-size:7px;line-height:12px;color:#1a1a1a;transform:scaleX(0.86);transform-origin:0 0">PF_CL_EU_L1_PRO_015</div>
<div class="t" style="left:216px;top:302.5px;font-size:7px;line-height:12px;color:#1a1a1a;transform:scaleX(0.86);transform-origin:0 0">PF_CL_USA_L1_PRO_0011</div>
<div class="t" style="left:310px;top:302.5px;font-size:7px;line-height:12px;color:#1a1a1a;transform:scaleX(0.86);transform-origin:0 0">KS_CL_US_SAPCRM_0015</div>
<div class="t" style="left:396px;top:302.5px;font-size:7px;line-height:12px;color:#1a1a1a;transform:scaleX(0.86);transform-origin:0 0">Process Owner Name</div>
<div class="t" style="left:475px;top:302.5px;font-size:7px;line-height:12px;color:#1a1a1a;transform:scaleX(0.86);transform-origin:0 0">SOX #</div>
<div class="t" style="left:515px;top:302.5px;font-size:7px;line-height:12px;color:#1a1a1a;transform:scaleX(0.86);transform-origin:0 0">Document #</div>
<div class="t" style="left:572px;top:302.5px;font-size:7px;line-height:12px;color:#1a1a1a;transform:scaleX(0.86);transform-origin:0 0">SME Initials</div>
<div style="left:618px;top:302px;width:43px;height:12px;background:#c6efce"></div>
<div class="t" style="left:625px;top:302.5px;font-size:7px;line-height:12px;color:#1c7530;transform:scaleX(0.86);transform-origin:0 0">Draft</div>
<div style="left:662px;top:303px;width:8px;height:10px;background:#6190cc"></div>
<div class="t" style="left:668px;top:302.0px;font-size:7px;line-height:12px;color:#1a1a1a;transform:scaleX(0.86);transform-origin:0 0">1</div>
<div style="left:23px;top:314px;width:681px;height:13px;background:#eeecf2;border-top:1px solid #e4e2ea;border-bottom:1px solid #e4e2ea"></div>
<div class="t" style="left:23px;top:314.5px;width:44px;text-align:center;font-size:7px;line-height:12px;color:#1a1a1a;transform:scaleX(0.86)">16</div>
<div class="t" style="left:68px;top:314.5px;font-size:7px;line-height:12px;color:#1a1a1a;transform:scaleX(0.86);transform-origin:0 0">Call Centre</div>
<div class="t" style="left:132px;top:314.5px;font-size:7px;line-height:12px;color:#1a1a1a;transform:scaleX(0.86);transform-origin:0 0">PF_CL_EU_L1_PRO_016</div>
<div class="t" style="left:216px;top:314.5px;font-size:7px;line-height:12px;color:#1a1a1a;transform:scaleX(0.86);transform-origin:0 0">PF_CL_USA_L1_O2C_0004</div>
<div class="t" style="left:310px;top:314.5px;font-size:7px;line-height:12px;color:#1a1a1a;transform:scaleX(0.86);transform-origin:0 0">KS_CL_US_SAPCRM_0016</div>
<div class="t" style="left:396px;top:314.5px;font-size:7px;line-height:12px;color:#1a1a1a;transform:scaleX(0.86);transform-origin:0 0">Process Owner Name</div>
<div class="t" style="left:475px;top:314.5px;font-size:7px;line-height:12px;color:#1a1a1a;transform:scaleX(0.86);transform-origin:0 0">SOX #</div>
<div class="t" style="left:515px;top:314.5px;font-size:7px;line-height:12px;color:#1a1a1a;transform:scaleX(0.86);transform-origin:0 0">Document #</div>
<div class="t" style="left:572px;top:314.5px;font-size:7px;line-height:12px;color:#1a1a1a;transform:scaleX(0.86);transform-origin:0 0">SME Initials</div>
<div style="left:618px;top:314px;width:43px;height:12px;background:#ffe99a"></div>
<div class="t" style="left:625px;top:314.5px;font-size:7px;line-height:12px;color:#ad8430;transform:scaleX(0.86);transform-origin:0 0">Review</div>
<div style="left:662px;top:315px;width:9px;height:10px;background:#6190cc"></div>
<div class="t" style="left:668px;top:314.0px;font-size:7px;line-height:12px;color:#1a1a1a;transform:scaleX(0.86);transform-origin:0 0">1.1</div>
<div class="t" style="left:23px;top:327.0px;width:44px;text-align:center;font-size:7px;line-height:12px;color:#1a1a1a;transform:scaleX(0.86)">17</div>
<div class="t" style="left:68px;top:327.0px;font-size:7px;line-height:12px;color:#1a1a1a;transform:scaleX(0.86);transform-origin:0 0">R&amp;D</div>
<div class="t" style="left:132px;top:327.0px;font-size:7px;line-height:12px;color:#1a1a1a;transform:scaleX(0.86);transform-origin:0 0">PF_CL_EU_L1_PRO_017</div>
<div class="t" style="left:216px;top:327.0px;font-size:7px;line-height:12px;color:#1a1a1a;transform:scaleX(0.86);transform-origin:0 0">PF_CL_USA_L1_PRO_0009</div>
<div class="t" style="left:310px;top:327.0px;font-size:7px;line-height:12px;color:#1a1a1a;transform:scaleX(0.86);transform-origin:0 0">KS_CL_US_SAPCRM_0017</div>
<div class="t" style="left:396px;top:327.0px;font-size:7px;line-height:12px;color:#1a1a1a;transform:scaleX(0.86);transform-origin:0 0">Process Owner Name</div>
<div class="t" style="left:475px;top:327.0px;font-size:7px;line-height:12px;color:#1a1a1a;transform:scaleX(0.86);transform-origin:0 0">SOX #</div>
<div class="t" style="left:515px;top:327.0px;font-size:7px;line-height:12px;color:#1a1a1a;transform:scaleX(0.86);transform-origin:0 0">Document #</div>
<div class="t" style="left:572px;top:327.0px;font-size:7px;line-height:12px;color:#1a1a1a;transform:scaleX(0.86);transform-origin:0 0">SME Initials</div>
<div style="left:618px;top:326px;width:43px;height:12px;background:#f6cdd3"></div>
<div class="t" style="left:625px;top:327.0px;font-size:7px;line-height:12px;color:#cc2a44;transform:scaleX(0.86);transform-origin:0 0">Approved</div>
<div style="left:662px;top:327px;width:10px;height:10px;background:#6190cc"></div>
<div class="t" style="left:668px;top:326.5px;font-size:7px;line-height:12px;color:#1a1a1a;transform:scaleX(0.86);transform-origin:0 0">1.2</div>
<div style="left:23px;top:338px;width:681px;height:13px;background:#eeecf2;border-top:1px solid #e4e2ea;border-bottom:1px solid #e4e2ea"></div>
<div class="t" style="left:23px;top:339.0px;width:44px;text-align:center;font-size:7px;line-height:12px;color:#1a1a1a;transform:scaleX(0.86)">18</div>
<div class="t" style="left:68px;top:339.0px;font-size:7px;line-height:12px;color:#1a1a1a;transform:scaleX(0.86);transform-origin:0 0">Testing</div>
<div class="t" style="left:132px;top:339.0px;font-size:7px;line-height:12px;color:#1a1a1a;transform:scaleX(0.86);transform-origin:0 0">PF_CL_EU_L1_PRO_018</div>
<div class="t" style="left:216px;top:339.0px;font-size:7px;line-height:12px;color:#1a1a1a;transform:scaleX(0.86);transform-origin:0 0">PF_CL_USA_L1_PRO_0022</div>
<div class="t" style="left:310px;top:339.0px;font-size:7px;line-height:12px;color:#1a1a1a;transform:scaleX(0.86);transform-origin:0 0">KS_CL_US_SAPCRM_0018</div>
<div class="t" style="left:396px;top:339.0px;font-size:7px;line-height:12px;color:#1a1a1a;transform:scaleX(0.86);transform-origin:0 0">Process Owner Name</div>
<div class="t" style="left:475px;top:339.0px;font-size:7px;line-height:12px;color:#1a1a1a;transform:scaleX(0.86);transform-origin:0 0">SOX #</div>
<div class="t" style="left:515px;top:339.0px;font-size:7px;line-height:12px;color:#1a1a1a;transform:scaleX(0.86);transform-origin:0 0">Document #</div>
<div class="t" style="left:572px;top:339.0px;font-size:7px;line-height:12px;color:#1a1a1a;transform:scaleX(0.86);transform-origin:0 0">SME Initials</div>
<div style="left:618px;top:338px;width:43px;height:12px;background:#c6efce"></div>
<div class="t" style="left:625px;top:339.0px;font-size:7px;line-height:12px;color:#1c7530;transform:scaleX(0.86);transform-origin:0 0">Draft</div>
<div style="left:662px;top:339px;width:16px;height:10px;background:#6190cc"></div>
<div class="t" style="left:668px;top:338.5px;font-size:7px;line-height:12px;color:#1a1a1a;transform:scaleX(0.86);transform-origin:0 0">2</div>
<div class="t" style="left:23px;top:351.0px;width:44px;text-align:center;font-size:7px;line-height:12px;color:#1a1a1a;transform:scaleX(0.86)">19</div>
<div class="t" style="left:68px;top:351.0px;font-size:7px;line-height:12px;color:#1a1a1a;transform:scaleX(0.86);transform-origin:0 0">Finance</div>
<div class="t" style="left:132px;top:351.0px;font-size:7px;line-height:12px;color:#1a1a1a;transform:scaleX(0.86);transform-origin:0 0">PF_CL_EU_L1_PRO_019</div>
<div class="t" style="left:216px;top:351.0px;font-size:7px;line-height:12px;color:#1a1a1a;transform:scaleX(0.86);transform-origin:0 0">PF_CL_USA_L1_PRO_0012</div>
<div class="t" style="left:310px;top:351.0px;font-size:7px;line-height:12px;color:#1a1a1a;transform:scaleX(0.86);transform-origin:0 0">KS_CL_US_SAPCRM_0019</div>
<div class="t" style="left:396px;top:351.0px;font-size:7px;line-height:12px;color:#1a1a1a;transform:scaleX(0.86);transform-origin:0 0">Process Owner Name</div>
<div class="t" style="left:475px;top:351.0px;font-size:7px;line-height:12px;color:#1a1a1a;transform:scaleX(0.86);transform-origin:0 0">SOX #</div>
<div class="t" style="left:515px;top:351.0px;font-size:7px;line-height:12px;color:#1a1a1a;transform:scaleX(0.86);transform-origin:0 0">Document #</div>
<div class="t" style="left:572px;top:351.0px;font-size:7px;line-height:12px;color:#1a1a1a;transform:scaleX(0.86);transform-origin:0 0">SME Initials</div>
<div style="left:618px;top:350px;width:43px;height:12px;background:#ffe99a"></div>
<div class="t" style="left:625px;top:351.0px;font-size:7px;line-height:12px;color:#ad8430;transform:scaleX(0.86);transform-origin:0 0">Review</div>
<div style="left:662px;top:351px;width:17px;height:10px;background:#6190cc"></div>
<div class="t" style="left:668px;top:350.5px;font-size:7px;line-height:12px;color:#1a1a1a;transform:scaleX(0.86);transform-origin:0 0">2.1</div>
<div style="left:23px;top:362px;width:681px;height:13px;background:#eeecf2;border-top:1px solid #e4e2ea;border-bottom:1px solid #e4e2ea"></div>
<div class="t" style="left:23px;top:363.0px;width:44px;text-align:center;font-size:7px;line-height:12px;color:#1a1a1a;transform:scaleX(0.86)">20</div>
<div class="t" style="left:68px;top:363.0px;font-size:7px;line-height:12px;color:#1a1a1a;transform:scaleX(0.86);transform-origin:0 0">Security</div>
<div class="t" style="left:132px;top:363.0px;font-size:7px;line-height:12px;color:#1a1a1a;transform:scaleX(0.86);transform-origin:0 0">PF_CL_EU_L1_PRO_020</div>
<div class="t" style="left:216px;top:363.0px;font-size:7px;line-height:12px;color:#1a1a1a;transform:scaleX(0.86);transform-origin:0 0">PF_CL_USA_L1O2I_0020</div>
<div class="t" style="left:310px;top:363.0px;font-size:7px;line-height:12px;color:#1a1a1a;transform:scaleX(0.86);transform-origin:0 0">KS_CL_US_SAPCRM_0020</div>
<div class="t" style="left:396px;top:363.0px;font-size:7px;line-height:12px;color:#1a1a1a;transform:scaleX(0.86);transform-origin:0 0">Process Owner Name</div>
<div class="t" style="left:475px;top:363.0px;font-size:7px;line-height:12px;color:#1a1a1a;transform:scaleX(0.86);transform-origin:0 0">SOX #</div>
<div class="t" style="left:515px;top:363.0px;font-size:7px;line-height:12px;color:#1a1a1a;transform:scaleX(0.86);transform-origin:0 0">Document #</div>
<div class="t" style="left:572px;top:363.0px;font-size:7px;line-height:12px;color:#1a1a1a;transform:scaleX(0.86);transform-origin:0 0">SME Initials</div>
<div style="left:618px;top:362px;width:43px;height:12px;background:#f6cdd3"></div>
<div class="t" style="left:625px;top:363.0px;font-size:7px;line-height:12px;color:#cc2a44;transform:scaleX(0.86);transform-origin:0 0">Approved</div>
<div style="left:662px;top:363px;width:18px;height:10px;background:#6190cc"></div>
<div class="t" style="left:668px;top:362.5px;font-size:7px;line-height:12px;color:#1a1a1a;transform:scaleX(0.86);transform-origin:0 0">2.2</div>
<div style="left:732px;top:88px;width:10px;height:288px;background:#efedf3"></div>
<div style="left:732px;top:88px;width:1px;height:288px;background:#e4e4e4"></div>
<div style="left:734px;top:88px;width:7px;height:8px;background:#fff;border:1px solid #d4d4d4"></div>
<svg style="position:absolute;left:735px;top:90px" width="5" height="3"><path d="M0.5 2.5 L2.5 0.5 L4.5 2.5Z" fill="#666"/></svg>
<div style="left:734px;top:96px;width:7px;height:146px;background:#fff;border:1px solid #e0e0e0"></div>
<div style="left:734px;top:370px;width:7px;height:6px;background:#fff;border:1px solid #d4d4d4"></div>
<svg style="position:absolute;left:735px;top:372px" width="5" height="3"><path d="M0.5 0.5 L2.5 2.5 L4.5 0.5Z" fill="#666"/></svg>
<div style="left:0px;top:375px;width:733px;height:1px;background:#d4d4d4"></div>
<div style="left:0px;top:376px;width:742px;height:13px;background:#fff"></div>
<svg style="position:absolute;left:12px;top:380px" width="20" height="5"><path d="M3 0.5 L1 2.5 L3 4.5" fill="none" stroke="#c8c8c8" stroke-width="0.8"/><path d="M15 0.5 L17 2.5 L15 4.5" fill="none" stroke="#c8c8c8" stroke-width="0.8"/></svg>
<div style="left:46px;top:376px;width:45px;height:12px;background:linear-gradient(#fafbfc,#e2e9f1);border-left:1px solid #e6e6e6"></div>
<div style="left:47px;top:386px;width:43px;height:1.5px;background:linear-gradient(90deg,#8fc4a6,#5e9f7c,#8fc4a6)"></div>
<div class="t" style="left:51.5px;top:378.5px;font-size:6.3px;line-height:8px;color:#217346;font-weight:bold;transform:scaleX(0.9);transform-origin:0 0">Process List</div>
<div style="left:92px;top:377px;width:35.5px;height:10px;background:#213869"></div>
<div class="t" style="left:97px;top:378.5px;font-size:6.5px;line-height:8px;color:#d6dcea;font-weight:bold;transform:scaleX(0.84);transform-origin:0 0">Template</div>
<svg style="position:absolute;left:143px;top:378px" width="9" height="9"><circle cx="4.5" cy="4.5" r="3.6" fill="none" stroke="#999" stroke-width="0.7"/><path d="M4.5 2.5 V6.5 M2.5 4.5 H6.5" stroke="#777" stroke-width="0.8"/></svg>
<div style="left:446px;top:378px;width:1px;height:8px;border-left:1px dotted #bbb"></div>
<div style="left:452px;top:379px;width:8px;height:7px;background:#fff;border:1px solid #c8c8c8"></div>
<svg style="position:absolute;left:454.5px;top:380.5px" width="3" height="4"><path d="M2.5 0 L0.5 2 L2.5 4Z" fill="#666"/></svg>
<div style="left:459px;top:379px;width:245px;height:7px;background:#fff;border:1px solid #c8c8c8"></div>
<div style="left:704px;top:379px;width:21px;height:7px;background:#e6e6e6"></div>
<div style="left:725px;top:379px;width:8px;height:7px;background:#fff;border:1px solid #c8c8c8"></div>
<svg style="position:absolute;left:727.5px;top:380.5px" width="3" height="4"><path d="M0.5 0 L2.5 2 L0.5 4Z" fill="#666"/></svg>
<div style="left:0px;top:388.5px;width:742px;height:11.5px;background:#217346"></div>
<div style="left:0px;top:399px;width:742px;height:1px;background:#1c4a30"></div>
<div style="left:0px;top:399px;width:22px;height:1px;background:#111"></div>
<div class="t" style="left:3.5px;top:390px;font-size:5.5px;line-height:7px;color:#fff;transform:scaleX(0.92);transform-origin:0 0">READY</div>
<svg style="position:absolute;left:28px;top:390px" width="7" height="7"><rect x="0.5" y="0.5" width="6" height="6" fill="none" stroke="#d0e6d8" stroke-width="0.7"/><path d="M0.5 2.5 H6.5 M3.5 2.5 V6.5" stroke="#d0e6d8" stroke-width="0.6"/></svg>
<div style="left:607px;top:388.5px;width:18px;height:11.5px;background:#195a36"></div>
<svg style="position:absolute;left:612px;top:390px" width="8" height="8"><rect x="0.5" y="0.5" width="7" height="7" fill="none" stroke="#cfe3d6" stroke-width="0.7"/><path d="M0.5 3 H7.5 M0.5 5.5 H7.5 M4 0.5 V7.5" stroke="#cfe3d6" stroke-width="0.6"/></svg>
<svg style="position:absolute;left:629.5px;top:390px" width="8" height="8"><rect x="0.5" y="0.5" width="7" height="7" fill="none" stroke="#a9cdb7" stroke-width="0.7"/><rect x="2" y="2" width="4" height="4" fill="none" stroke="#a9cdb7" stroke-width="0.6"/></svg>
<svg style="position:absolute;left:646.5px;top:390px" width="8" height="8"><rect x="0.5" y="0.5" width="7" height="7" fill="none" stroke="#cfe3d6" stroke-width="0.7"/><rect x="1.5" y="1.5" width="3" height="3" fill="#cfe3d6"/></svg>
<div style="left:662px;top:393px;width:3px;height:1px;background:#d8eadf"></div>
<div style="left:667px;top:392.5px;width:48px;height:2px;background:repeating-linear-gradient(90deg,#9ccab0 0 1px,#4d8f69 1px 2px)"></div>
<div style="left:689px;top:390.5px;width:2px;height:6px;background:#fff"></div>
<svg style="position:absolute;left:715px;top:391px" width="5" height="5"><path d="M2.5 0 V5 M0 2.5 H5" stroke="#d8eadf" stroke-width="0.9"/></svg>
<div class="t" style="left:726px;top:390.2px;font-size:5.8px;line-height:7px;color:#f2f8f4;transform:scaleX(0.9);transform-origin:0 0">100%</div>
</body></html>
